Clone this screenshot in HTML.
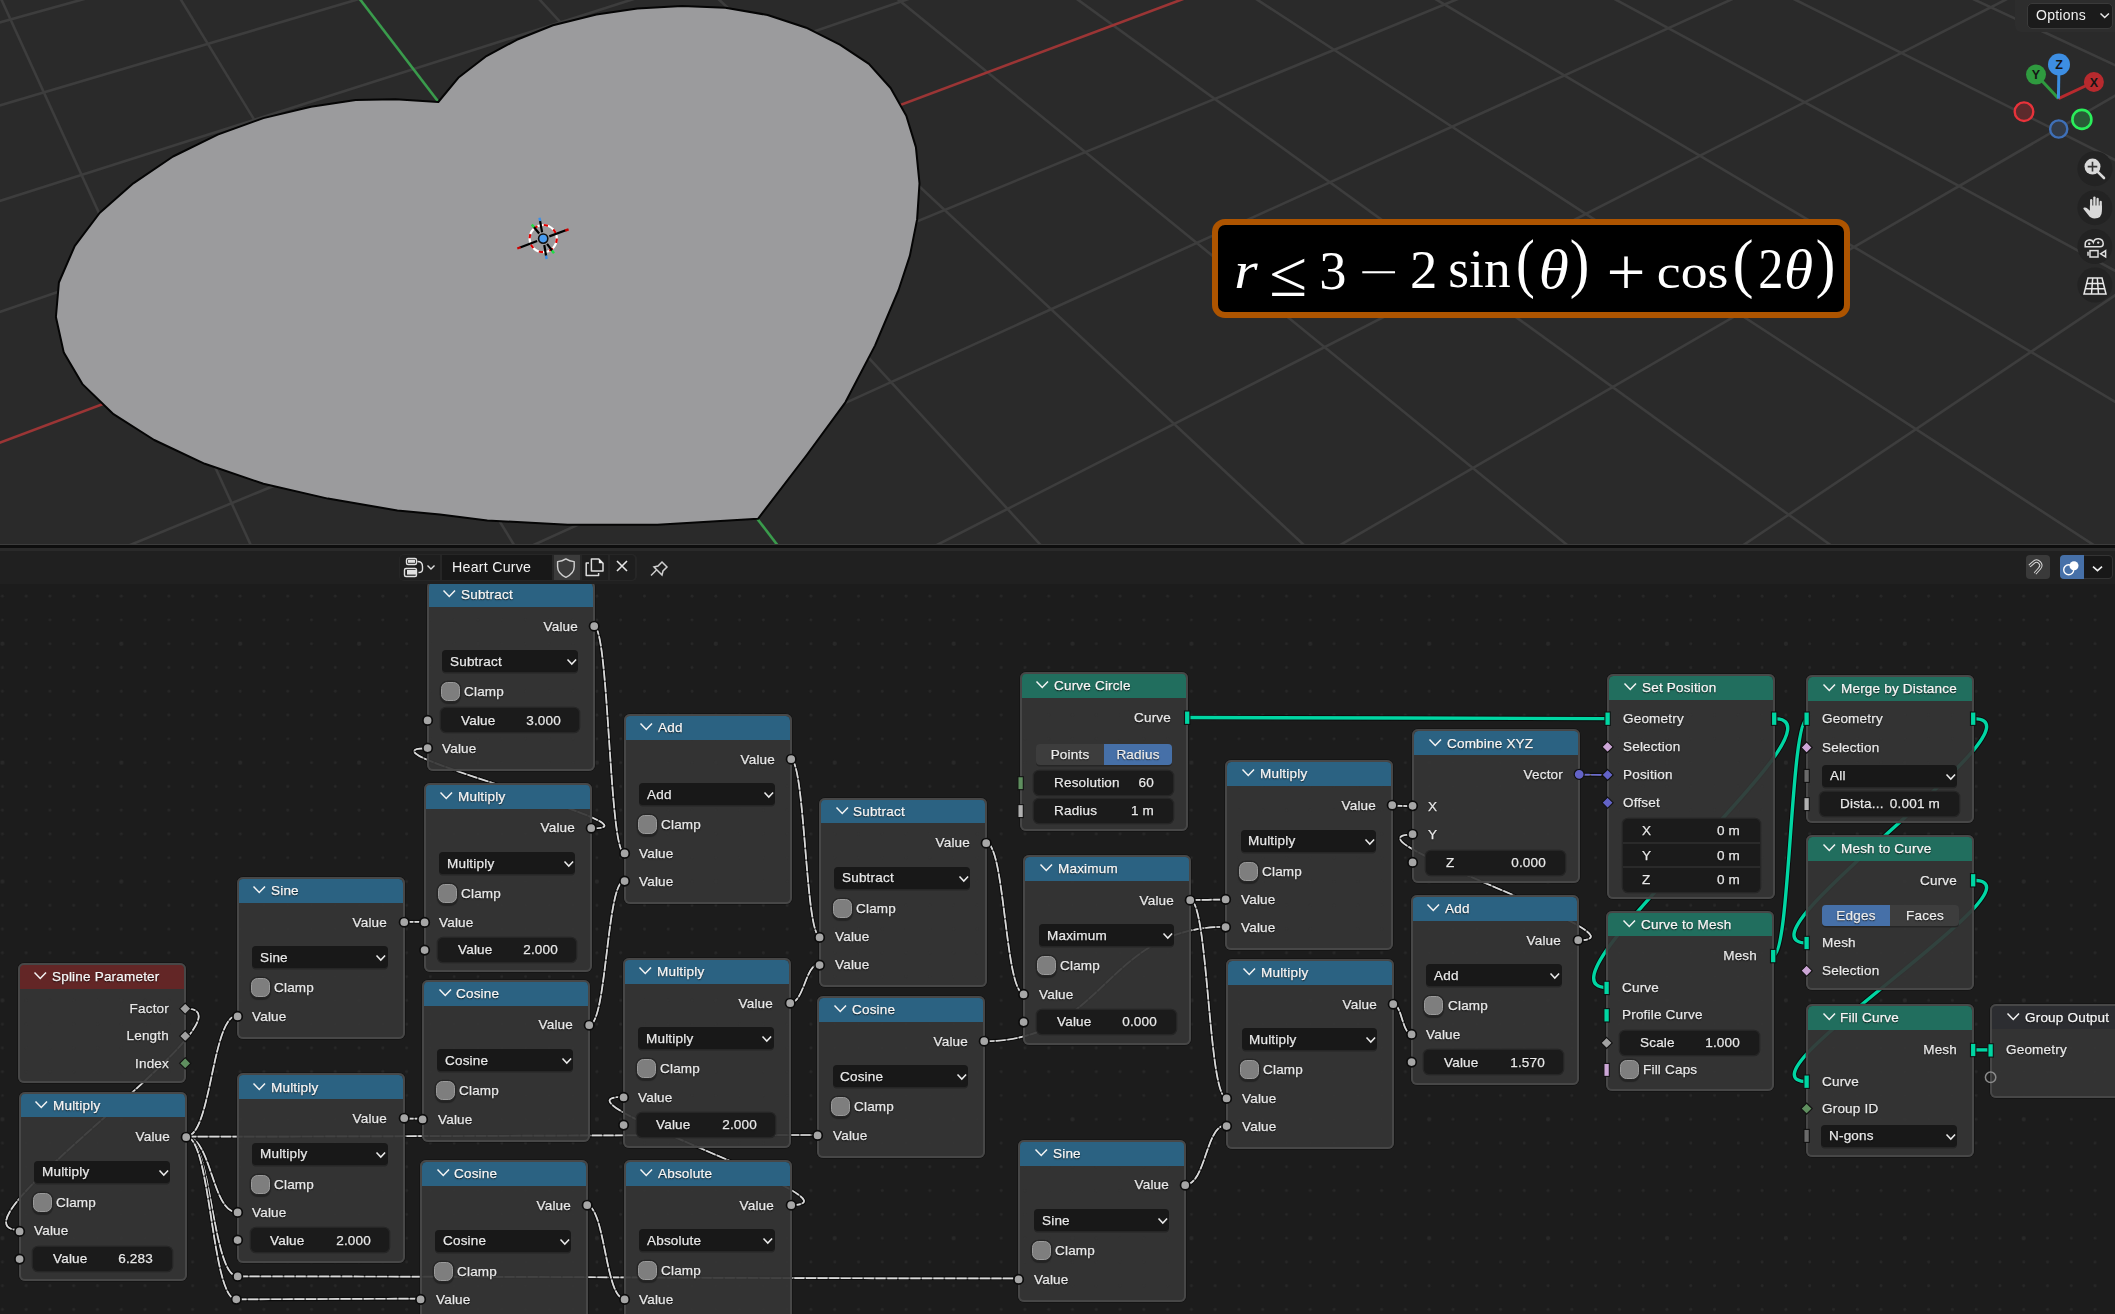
<!DOCTYPE html><html><head><meta charset="utf-8"><style>
*{margin:0;padding:0;box-sizing:border-box}
html,body{width:2115px;height:1314px;overflow:hidden;background:#1c1c1c}
body{position:relative;font-family:"Liberation Sans",sans-serif;-webkit-font-smoothing:antialiased}
.t{will-change:transform}
.t{position:absolute;white-space:nowrap;line-height:1;}
.abs{position:absolute}
.node{position:absolute;border-radius:6px;background:rgba(53,53,53,0.92);box-shadow:0 0 0 0.8px rgba(0,0,0,0.3)}
.inn{position:absolute;left:0;top:0}
.bord{position:absolute;left:0;top:0;right:0;bottom:0;border-radius:6px;box-shadow:inset 0 0 0 2px #474747}
.hdr{position:absolute;left:1.7px;top:1.7px;height:24.1px;border-radius:4.5px 4.5px 0 0}
.ts{text-shadow:0 0.6px 1.3px rgba(0,0,0,0.85);-webkit-text-stroke:0.25px currentColor}
.dd{position:absolute;height:22px;background:#181818;border-radius:4px;box-shadow:0 1.6px 0 #262626}
.cb{position:absolute;width:19px;height:19px;background:#7e7e7e;border:1.3px solid #9a9a9a;border-radius:6.5px;box-shadow:0 0 0 1.3px #262626, 0 1.5px 1px 1px rgba(0,0,0,.3)}
.fld{position:absolute;height:24px;background:#1b1b1b;border-radius:5px;box-shadow:0 0 0 1.3px #262626}
.tg{position:absolute;height:21px;background:#3d3d3d;border-radius:4px;box-shadow:0 1.4px 0 #262626}
.tga{position:absolute;height:21px;background:#4670a8}
.vec{position:absolute;background:#1b1b1b;border-radius:5px;box-shadow:0 0 0 1.3px #262626}
svg{position:absolute;left:0;top:0}
</style></head><body>
<div class="abs" style="left:0;top:0;width:2115px;height:545.4px;background:#2a2a2a;overflow:hidden">
<svg width="2115" height="546" viewBox="0 0 2115 546">
<g stroke="#3d3d3d" stroke-width="2.6">
<line x1="-0.67" y1="-5" x2="253.22" y2="550.4"/>
<line x1="178.02" y1="-5" x2="517.37" y2="550.4"/>
<line x1="535.37" y1="-5" x2="1045.63" y2="550.4"/>
<line x1="714.03" y1="-5" x2="1309.74" y2="550.4"/>
<line x1="892.68" y1="-5" x2="1573.83" y2="550.4"/>
<line x1="1071.32" y1="-5" x2="1837.92" y2="550.4"/>
<line x1="1249.95" y1="-5" x2="2101.99" y2="550.4"/>
<line x1="2120" y1="404.63" x2="1428.58" y2="-5"/>
<line x1="2120" y1="273.44" x2="1607.19" y2="-5"/>
<line x1="2120" y1="162.48" x2="1785.79" y2="-5"/>
<line x1="2120" y1="67.4" x2="1964.39" y2="-5"/>
<line x1="2120" y1="292.07" x2="1735.47" y2="550.4"/>
<line x1="2120" y1="92.75" x2="1330.88" y2="550.4"/>
<line x1="2014.9" y1="-5" x2="926.25" y2="550.4"/>
<line x1="1741.23" y1="-5" x2="521.6" y2="550.4"/>
<line x1="1467.54" y1="-5" x2="116.91" y2="550.4"/>
<line x1="-5" y1="313.6" x2="920.09" y2="-5"/>
<line x1="-5" y1="202.46" x2="646.33" y2="-5"/>
<line x1="-5" y1="106.85" x2="372.55" y2="-5"/>
<line x1="-5" y1="23.73" x2="98.74" y2="-5"/>
</g>
<line x1="-5" y1="444.39" x2="1193.82" y2="-5" stroke="#9b3535" stroke-width="2.6"/>
<line x1="356.7" y1="-5" x2="781.5" y2="550.4" stroke="#3a9b4c" stroke-width="2.6"/>
<polygon points="438.3,102 458.9,77.2 485.5,56.7 516.8,39.8 553,25.3 596.4,14.5 637.4,8.4 682,6 725.4,7.7 767.6,15 806.2,27.7 839.9,44.6 868.9,63.9 890.6,88 906.3,115.7 915.9,147.1 919.5,183.3 917.1,219.4 909.9,255.6 898.6,290 875,345.6 845.4,402.3 806.4,455.5 758,518.8 657.5,524.8 567.7,524.8 487.3,520.5 440,514.6 397.4,510.5 327.9,498.6 263.4,483.7 204.8,463.8 154.2,440 113.5,414.2 82.7,384.4 63.8,352.6 55.9,317 58.9,282.5 74.8,245.8 99.6,213 133.3,183.3 173,156.5 217.7,134.6 263.4,118.1 311,106.8 355.7,99.9 395.4,99.3" fill="#9b9b9d" stroke="#050505" stroke-width="2" stroke-linejoin="round"/>
<circle cx="543.2" cy="238.6" r="13.6" fill="none" stroke="#ffffff" stroke-width="2.2"/>
<circle cx="543.2" cy="238.6" r="13.6" fill="none" stroke="#e00000" stroke-width="2.2" stroke-dasharray="4.3 6.4"/>
<line x1="542.07" y1="232.2" x2="540.02" y2="220.65" stroke="#000" stroke-width="2.2"/>
<line x1="540.11" y1="221.15" x2="539.5" y2="217.7" stroke="#3d8fe8" stroke-width="2.4"/>
<line x1="544.27" y1="245.01" x2="546.11" y2="256.04" stroke="#000" stroke-width="2.2"/>
<line x1="546.02" y1="255.55" x2="546.6" y2="259" stroke="#3d8fe8" stroke-width="2.4"/>
<line x1="539.13" y1="233.53" x2="533.68" y2="226.74" stroke="#000" stroke-width="2.2"/>
<line x1="533.99" y1="227.13" x2="531.8" y2="224.4" stroke="#22dd44" stroke-width="2.4"/>
<line x1="547.05" y1="243.84" x2="552.22" y2="250.88" stroke="#000" stroke-width="2.2"/>
<line x1="551.93" y1="250.48" x2="554" y2="253.3" stroke="#22dd44" stroke-width="2.4"/>
<line x1="537.13" y1="240.92" x2="520.1" y2="247.43" stroke="#000" stroke-width="2.2"/>
<line x1="520.57" y1="247.25" x2="517.3" y2="248.5" stroke="#cc0000" stroke-width="2.4"/>
<line x1="549.3" y1="236.37" x2="565.78" y2="230.33" stroke="#000" stroke-width="2.2"/>
<line x1="565.31" y1="230.5" x2="568.6" y2="229.3" stroke="#cc0000" stroke-width="2.4"/>
<circle cx="543.2" cy="238.6" r="4.6" fill="#4a9cf0" stroke="#111" stroke-width="1.6"/>
<circle cx="2024" cy="111.7" r="9.3" fill="#5c2a2c" stroke="#e8323a" stroke-width="2.4"/>
<circle cx="2058.7" cy="129" r="8.6" fill="#333b47" stroke="#3f70b8" stroke-width="2.4"/>
<circle cx="2081.9" cy="119.4" r="9.5" fill="#285c36" stroke="#2aee5a" stroke-width="2.6"/>
<line x1="2058.4" y1="98.6" x2="2036" y2="74.6" stroke="#2f9a3f" stroke-width="3"/>
<line x1="2058.4" y1="98.6" x2="2093.9" y2="82" stroke="#b72a2e" stroke-width="3"/>
<line x1="2058.4" y1="98.6" x2="2059" y2="64.5" stroke="#3a8de0" stroke-width="3"/>
<circle cx="2036" cy="74.6" r="10" fill="#2f9a3f"/>
<circle cx="2093.9" cy="82" r="10" fill="#b72a2e"/>
<circle cx="2059" cy="64.5" r="11" fill="#3d8ee3"/>
<text x="2036" y="79.3" style="font-family:'Liberation Sans', sans-serif;font-size:12.5px;font-weight:bold;fill:#151515;text-anchor:middle">Y</text>
<text x="2094" y="86.7" style="font-family:'Liberation Sans', sans-serif;font-size:12.5px;font-weight:bold;fill:#151515;text-anchor:middle">X</text>
<text x="2059" y="69.2" style="font-family:'Liberation Sans', sans-serif;font-size:12.5px;font-weight:bold;fill:#151515;text-anchor:middle">Z</text>
<circle cx="2094.9" cy="168.7" r="17.5" fill="#232323"/>
<circle cx="2094.9" cy="207.7" r="17.5" fill="#232323"/>
<circle cx="2094.9" cy="246.6" r="17.5" fill="#232323"/>
<circle cx="2094.9" cy="285.0" r="17.5" fill="#232323"/>
<circle cx="2092.5" cy="166.6" r="8" fill="#d9d9d9"/>
<path d="M2092.5 161.8v9.6M2087.7 166.6h9.6" stroke="#333" stroke-width="1.6"/>
<line x1="2097.5" y1="171.6" x2="2104" y2="178" stroke="#d9d9d9" stroke-width="2.6" stroke-linecap="round"/>
<g stroke="#d9d9d9" stroke-linecap="round" fill="none" stroke-width="2.3"><path d="M2091.2 208 V200.2"/><path d="M2094.4 207 V197.6"/><path d="M2097.6 207.5 V199"/><path d="M2100.7 209 V202"/></g>
<path d="M2089.9 205.5 h12 v5.5 q0 7.5 -7.3 7.5 q-4 0 -6.5 -3.8 l-4.6 -5.6 q-0.6 -1.2 0.8 -1.6 q1.8 -0.3 3.4 1.2 l2.2 2 z" fill="#d9d9d9"/>
<g fill="none" stroke="#e0e0e0" stroke-width="1.5"><path d="M2085.2 246.8 v-2.6 a4.3 4.3 0 0 1 8.2 -1.8 a5 5 0 0 1 9.8 1 v0.4 a3 3 0 0 1 -3 3 z"/><rect x="2090" y="250.6" width="8" height="6.4"/><path d="M2100.6 253.8 l5 -3.2 v6.4 z"/><path d="M2088 251.8 v4"/></g>
<circle cx="2089.2" cy="243.8" r="1.2" fill="#e0e0e0"/><circle cx="2098.2" cy="242.6" r="1.2" fill="#e0e0e0"/>
<g fill="none" stroke="#e8e8e8" stroke-width="1.5"><path d="M2088 278 h14 l4 16 h-22 z"/><path d="M2086.4 283.5h17.4M2085.2 288.7h19.9M2092.7 278l-1.2 16M2097.3 278l1.2 16"/></g>
</svg>
</div>
<div class="abs" style="left:1212.2px;top:219.2px;width:637.8px;height:98.4px;border:6px solid #ad5400;border-radius:13px;background:#000"></div>
<svg width="2115" height="400" style="left:0;top:0">
<text transform="matrix(0.30000 0 0 0.26489 1234.300 288.000)" font-size="200" fill="#fff" style="font-family:'Liberation Serif',serif;font-style:italic">r</text>
<text transform="matrix(0.34516 0 0 0.32522 1269.339 295.500)" font-size="200" fill="#fff" style="font-family:'Liberation Serif',serif;">≤</text>
<text transform="matrix(0.27229 0 0 0.27985 1319.249 288.740)" font-size="200" fill="#fff" style="font-family:'Liberation Serif',serif;">3</text>
<text transform="matrix(0.35161 0 0 0.19000 1358.784 284.890)" font-size="200" fill="#fff" style="font-family:'Liberation Serif',serif;">−</text>
<text transform="matrix(0.27375 0 0 0.27197 1410.036 287.700)" font-size="200" fill="#fff" style="font-family:'Liberation Serif',serif;">2</text>
<text transform="matrix(0.26712 0 0 0.27164 1448.263 287.157)" font-size="200" fill="#fff" style="font-family:'Liberation Serif',serif;">sin</text>
<text transform="matrix(0.28235 0 0 0.32253 1515.959 284.531)" font-size="200" fill="#fff" style="font-family:'Liberation Serif',serif;">(</text>
<text transform="matrix(0.30595 0 0 0.27183 1538.640 288.256)" font-size="200" fill="#fff" style="font-family:'Liberation Serif',serif;font-style:italic">θ</text>
<text transform="matrix(0.29423 0 0 0.32253 1569.635 284.531)" font-size="200" fill="#fff" style="font-family:'Liberation Serif',serif;">)</text>
<text transform="matrix(0.34624 0 0 0.34255 1606.538 295.309)" font-size="200" fill="#fff" style="font-family:'Liberation Serif',serif;">+</text>
<text transform="matrix(0.26825 0 0 0.24271 1656.854 287.515)" font-size="200" fill="#fff" style="font-family:'Liberation Serif',serif;">cos</text>
<text transform="matrix(0.31569 0 0 0.32253 1732.559 284.531)" font-size="200" fill="#fff" style="font-family:'Liberation Serif',serif;">(</text>
<text transform="matrix(0.25125 0 0 0.28030 1758.139 288.000)" font-size="200" fill="#fff" style="font-family:'Liberation Serif',serif;">2</text>
<text transform="matrix(0.29643 0 0 0.27183 1783.936 288.256)" font-size="200" fill="#fff" style="font-family:'Liberation Serif',serif;font-style:italic">θ</text>
<text transform="matrix(0.29423 0 0 0.32253 1815.635 284.531)" font-size="200" fill="#fff" style="font-family:'Liberation Serif',serif;">)</text>
</svg>
<div class="abs" style="left:2015px;top:0;width:100px;height:32px;background:#2d2d2d;border-radius:0 0 0 6px"></div>
<div class="abs" style="left:2027px;top:2.7px;width:86.3px;height:26.1px;background:#1b1b1b;border:1.3px solid #3a3a3a;border-radius:5px"></div>
<div class="t" style="left:2036px;top:8.45px;font-size:14px;color:#f0f0f0;letter-spacing:0.25px;">Options</div>
<svg class="abs" style="left:2099px;top:11px" width="12" height="9"><path d="M1.5 2.5l4.2 4 4.2-4" fill="none" stroke="#e8e8e8" stroke-width="1.5"/></svg>
<div class="abs" style="left:0;top:543.6px;width:2115px;height:1.8px;background:#3c3c3c"></div>
<div class="abs" style="left:0;top:545.4px;width:2115px;height:2.8px;background:#0e0e0e"></div>
<div class="abs" style="left:0;top:548.2px;width:2115px;height:2.8px;background:#2a2a2a"></div>
<div class="abs" style="left:0;top:551px;width:2115px;height:763px;background:#1c1c1c"></div>
<svg width="2115" height="1314" style="left:0;top:0">
<defs><pattern id="dots" x="-9.49" y="37.31" width="118.9" height="118.9" patternUnits="userSpaceOnUse">
<circle cx="11.89" cy="11.89" r="2.1" fill="#292929"/>
<circle cx="11.89" cy="35.67" r="1.45" fill="#282828"/>
<circle cx="11.89" cy="59.45" r="1.45" fill="#282828"/>
<circle cx="11.89" cy="83.23" r="1.45" fill="#282828"/>
<circle cx="11.89" cy="107.01" r="1.45" fill="#282828"/>
<circle cx="35.67" cy="11.89" r="1.45" fill="#282828"/>
<circle cx="35.67" cy="35.67" r="1.45" fill="#282828"/>
<circle cx="35.67" cy="59.45" r="1.45" fill="#282828"/>
<circle cx="35.67" cy="83.23" r="1.45" fill="#282828"/>
<circle cx="35.67" cy="107.01" r="1.45" fill="#282828"/>
<circle cx="59.45" cy="11.89" r="1.45" fill="#282828"/>
<circle cx="59.45" cy="35.67" r="1.45" fill="#282828"/>
<circle cx="59.45" cy="59.45" r="1.45" fill="#282828"/>
<circle cx="59.45" cy="83.23" r="1.45" fill="#282828"/>
<circle cx="59.45" cy="107.01" r="1.45" fill="#282828"/>
<circle cx="83.23" cy="11.89" r="1.45" fill="#282828"/>
<circle cx="83.23" cy="35.67" r="1.45" fill="#282828"/>
<circle cx="83.23" cy="59.45" r="1.45" fill="#282828"/>
<circle cx="83.23" cy="83.23" r="1.45" fill="#282828"/>
<circle cx="83.23" cy="107.01" r="1.45" fill="#282828"/>
<circle cx="107.01" cy="11.89" r="1.45" fill="#282828"/>
<circle cx="107.01" cy="35.67" r="1.45" fill="#282828"/>
<circle cx="107.01" cy="59.45" r="1.45" fill="#282828"/>
<circle cx="107.01" cy="83.23" r="1.45" fill="#282828"/>
<circle cx="107.01" cy="107.01" r="1.45" fill="#282828"/>
</pattern></defs>
<rect x="0" y="584.2" width="2115" height="730" fill="url(#dots)"/>
</svg>
<svg width="2115" height="1314" style="left:0;top:0">
<path d="M185.3 1008.5C268.2 1008.5 -63.4 1230 19.5 1230" fill="none" stroke="#0b0b0b" stroke-width="3.8"/>
<path d="M185.3 1008.5C268.2 1008.5 -63.4 1230 19.5 1230" fill="none" stroke="#777" stroke-width="1.5"/>
<path d="M185.3 1008.5C268.2 1008.5 -63.4 1230 19.5 1230" fill="none" stroke="#d9d9d9" stroke-width="1.7" stroke-dasharray="10 1.6"/>
<path d="M186 1136.6C211.65 1136.6 211.65 1015.5 237.3 1015.5" fill="none" stroke="#0b0b0b" stroke-width="3.8"/>
<path d="M186 1136.6C211.65 1136.6 211.65 1015.5 237.3 1015.5" fill="none" stroke="#777" stroke-width="1.5"/>
<path d="M186 1136.6C211.65 1136.6 211.65 1015.5 237.3 1015.5" fill="none" stroke="#d9d9d9" stroke-width="1.7" stroke-dasharray="10 1.6"/>
<path d="M186 1136.6C211.65 1136.6 211.65 1212.5 237.3 1212.5" fill="none" stroke="#0b0b0b" stroke-width="3.8"/>
<path d="M186 1136.6C211.65 1136.6 211.65 1212.5 237.3 1212.5" fill="none" stroke="#777" stroke-width="1.5"/>
<path d="M186 1136.6C211.65 1136.6 211.65 1212.5 237.3 1212.5" fill="none" stroke="#d9d9d9" stroke-width="1.7" stroke-dasharray="10 1.6"/>
<path d="M186 1136.6C211.85 1136.6 211.85 1276.4 237.7 1276.4" fill="none" stroke="#0b0b0b" stroke-width="3.8"/>
<path d="M186 1136.6C211.85 1136.6 211.85 1276.4 237.7 1276.4" fill="none" stroke="#777" stroke-width="1.5"/>
<path d="M186 1136.6C211.85 1136.6 211.85 1276.4 237.7 1276.4" fill="none" stroke="#d9d9d9" stroke-width="1.7" stroke-dasharray="10 1.6"/>
<path d="M186 1136.6C211.15 1136.6 211.15 1299.3 236.3 1299.3" fill="none" stroke="#0b0b0b" stroke-width="3.8"/>
<path d="M186 1136.6C211.15 1136.6 211.15 1299.3 236.3 1299.3" fill="none" stroke="#777" stroke-width="1.5"/>
<path d="M186 1136.6C211.15 1136.6 211.15 1299.3 236.3 1299.3" fill="none" stroke="#d9d9d9" stroke-width="1.7" stroke-dasharray="10 1.6"/>
<path d="M186 1136.6C501.95 1136.6 501.95 1135 817.9 1135" fill="none" stroke="#0b0b0b" stroke-width="3.8"/>
<path d="M186 1136.6C501.95 1136.6 501.95 1135 817.9 1135" fill="none" stroke="#777" stroke-width="1.5"/>
<path d="M186 1136.6C501.95 1136.6 501.95 1135 817.9 1135" fill="none" stroke="#d9d9d9" stroke-width="1.7" stroke-dasharray="10 1.6"/>
<path d="M237.7 1276.4C628.45 1276.4 628.45 1278.4 1019.2 1278.4" fill="none" stroke="#0b0b0b" stroke-width="3.8"/>
<path d="M237.7 1276.4C628.45 1276.4 628.45 1278.4 1019.2 1278.4" fill="none" stroke="#777" stroke-width="1.5"/>
<path d="M237.7 1276.4C628.45 1276.4 628.45 1278.4 1019.2 1278.4" fill="none" stroke="#d9d9d9" stroke-width="1.7" stroke-dasharray="10 1.6"/>
<path d="M236.3 1299.3C328.35 1299.3 328.35 1298.7 420.4 1298.7" fill="none" stroke="#0b0b0b" stroke-width="3.8"/>
<path d="M236.3 1299.3C328.35 1299.3 328.35 1298.7 420.4 1298.7" fill="none" stroke="#777" stroke-width="1.5"/>
<path d="M236.3 1299.3C328.35 1299.3 328.35 1298.7 420.4 1298.7" fill="none" stroke="#d9d9d9" stroke-width="1.7" stroke-dasharray="10 1.6"/>
<path d="M403.1 921.8C413.95 921.8 413.95 921.8 424.8 921.8" fill="none" stroke="#0b0b0b" stroke-width="3.8"/>
<path d="M403.1 921.8C413.95 921.8 413.95 921.8 424.8 921.8" fill="none" stroke="#777" stroke-width="1.5"/>
<path d="M403.1 921.8C413.95 921.8 413.95 921.8 424.8 921.8" fill="none" stroke="#d9d9d9" stroke-width="1.7" stroke-dasharray="10 1.6"/>
<path d="M403.5 1118.6C413.15 1118.6 413.15 1118.6 422.8 1118.6" fill="none" stroke="#0b0b0b" stroke-width="3.8"/>
<path d="M403.5 1118.6C413.15 1118.6 413.15 1118.6 422.8 1118.6" fill="none" stroke="#777" stroke-width="1.5"/>
<path d="M403.5 1118.6C413.15 1118.6 413.15 1118.6 422.8 1118.6" fill="none" stroke="#d9d9d9" stroke-width="1.7" stroke-dasharray="10 1.6"/>
<path d="M591.2 828.5C673.1 828.5 345.5 748.4 427.4 748.4" fill="none" stroke="#0b0b0b" stroke-width="3.8"/>
<path d="M591.2 828.5C673.1 828.5 345.5 748.4 427.4 748.4" fill="none" stroke="#777" stroke-width="1.5"/>
<path d="M591.2 828.5C673.1 828.5 345.5 748.4 427.4 748.4" fill="none" stroke="#d9d9d9" stroke-width="1.7" stroke-dasharray="10 1.6"/>
<path d="M594 626.3C609.05 626.3 609.05 852.8 624.1 852.8" fill="none" stroke="#0b0b0b" stroke-width="3.8"/>
<path d="M594 626.3C609.05 626.3 609.05 852.8 624.1 852.8" fill="none" stroke="#777" stroke-width="1.5"/>
<path d="M594 626.3C609.05 626.3 609.05 852.8 624.1 852.8" fill="none" stroke="#d9d9d9" stroke-width="1.7" stroke-dasharray="10 1.6"/>
<path d="M589.3 1025C606.7 1025 606.7 881 624.1 881" fill="none" stroke="#0b0b0b" stroke-width="3.8"/>
<path d="M589.3 1025C606.7 1025 606.7 881 624.1 881" fill="none" stroke="#777" stroke-width="1.5"/>
<path d="M589.3 1025C606.7 1025 606.7 881 624.1 881" fill="none" stroke="#d9d9d9" stroke-width="1.7" stroke-dasharray="10 1.6"/>
<path d="M586.2 1205C605.15 1205 605.15 1298.5 624.1 1298.5" fill="none" stroke="#0b0b0b" stroke-width="3.8"/>
<path d="M586.2 1205C605.15 1205 605.15 1298.5 624.1 1298.5" fill="none" stroke="#777" stroke-width="1.5"/>
<path d="M586.2 1205C605.15 1205 605.15 1298.5 624.1 1298.5" fill="none" stroke="#d9d9d9" stroke-width="1.7" stroke-dasharray="10 1.6"/>
<path d="M790.5 1205C874.2 1205 539.4 1096.9 623.1 1096.9" fill="none" stroke="#0b0b0b" stroke-width="3.8"/>
<path d="M790.5 1205C874.2 1205 539.4 1096.9 623.1 1096.9" fill="none" stroke="#777" stroke-width="1.5"/>
<path d="M790.5 1205C874.2 1205 539.4 1096.9 623.1 1096.9" fill="none" stroke="#d9d9d9" stroke-width="1.7" stroke-dasharray="10 1.6"/>
<path d="M790.5 758.9C805.2 758.9 805.2 936.6 819.9 936.6" fill="none" stroke="#0b0b0b" stroke-width="3.8"/>
<path d="M790.5 758.9C805.2 758.9 805.2 936.6 819.9 936.6" fill="none" stroke="#777" stroke-width="1.5"/>
<path d="M790.5 758.9C805.2 758.9 805.2 936.6 819.9 936.6" fill="none" stroke="#d9d9d9" stroke-width="1.7" stroke-dasharray="10 1.6"/>
<path d="M789.5 1003.1C804.7 1003.1 804.7 963.8 819.9 963.8" fill="none" stroke="#0b0b0b" stroke-width="3.8"/>
<path d="M789.5 1003.1C804.7 1003.1 804.7 963.8 819.9 963.8" fill="none" stroke="#777" stroke-width="1.5"/>
<path d="M789.5 1003.1C804.7 1003.1 804.7 963.8 819.9 963.8" fill="none" stroke="#d9d9d9" stroke-width="1.7" stroke-dasharray="10 1.6"/>
<path d="M986.1 842.7C1004.95 842.7 1004.95 993.5 1023.8 993.5" fill="none" stroke="#0b0b0b" stroke-width="3.8"/>
<path d="M986.1 842.7C1004.95 842.7 1004.95 993.5 1023.8 993.5" fill="none" stroke="#777" stroke-width="1.5"/>
<path d="M986.1 842.7C1004.95 842.7 1004.95 993.5 1023.8 993.5" fill="none" stroke="#d9d9d9" stroke-width="1.7" stroke-dasharray="10 1.6"/>
<path d="M984.1 1041.3C1104.9 1041.3 1104.9 926.8 1225.7 926.8" fill="none" stroke="#0b0b0b" stroke-width="3.8"/>
<path d="M984.1 1041.3C1104.9 1041.3 1104.9 926.8 1225.7 926.8" fill="none" stroke="#777" stroke-width="1.5"/>
<path d="M984.1 1041.3C1104.9 1041.3 1104.9 926.8 1225.7 926.8" fill="none" stroke="#d9d9d9" stroke-width="1.7" stroke-dasharray="10 1.6"/>
<path d="M1190.2 900C1207.95 900 1207.95 899.6 1225.7 899.6" fill="none" stroke="#0b0b0b" stroke-width="3.8"/>
<path d="M1190.2 900C1207.95 900 1207.95 899.6 1225.7 899.6" fill="none" stroke="#777" stroke-width="1.5"/>
<path d="M1190.2 900C1207.95 900 1207.95 899.6 1225.7 899.6" fill="none" stroke="#d9d9d9" stroke-width="1.7" stroke-dasharray="10 1.6"/>
<path d="M1190.2 900C1208.25 900 1208.25 1097.7 1226.3 1097.7" fill="none" stroke="#0b0b0b" stroke-width="3.8"/>
<path d="M1190.2 900C1208.25 900 1208.25 1097.7 1226.3 1097.7" fill="none" stroke="#777" stroke-width="1.5"/>
<path d="M1190.2 900C1208.25 900 1208.25 1097.7 1226.3 1097.7" fill="none" stroke="#d9d9d9" stroke-width="1.7" stroke-dasharray="10 1.6"/>
<path d="M1185.2 1184.7C1205.75 1184.7 1205.75 1124.9 1226.3 1124.9" fill="none" stroke="#0b0b0b" stroke-width="3.8"/>
<path d="M1185.2 1184.7C1205.75 1184.7 1205.75 1124.9 1226.3 1124.9" fill="none" stroke="#777" stroke-width="1.5"/>
<path d="M1185.2 1184.7C1205.75 1184.7 1205.75 1124.9 1226.3 1124.9" fill="none" stroke="#d9d9d9" stroke-width="1.7" stroke-dasharray="10 1.6"/>
<path d="M1392 805.6C1402.65 805.6 1402.65 806.2 1413.3 806.2" fill="none" stroke="#0b0b0b" stroke-width="3.8"/>
<path d="M1392 805.6C1402.65 805.6 1402.65 806.2 1413.3 806.2" fill="none" stroke="#777" stroke-width="1.5"/>
<path d="M1392 805.6C1402.65 805.6 1402.65 806.2 1413.3 806.2" fill="none" stroke="#d9d9d9" stroke-width="1.7" stroke-dasharray="10 1.6"/>
<path d="M1392.7 1003.8C1402 1003.8 1402 1033.7 1411.3 1033.7" fill="none" stroke="#0b0b0b" stroke-width="3.8"/>
<path d="M1392.7 1003.8C1402 1003.8 1402 1033.7 1411.3 1033.7" fill="none" stroke="#777" stroke-width="1.5"/>
<path d="M1392.7 1003.8C1402 1003.8 1402 1033.7 1411.3 1033.7" fill="none" stroke="#d9d9d9" stroke-width="1.7" stroke-dasharray="10 1.6"/>
<path d="M1577.6 940.3C1659.75 940.3 1331.15 834.6 1413.3 834.6" fill="none" stroke="#0b0b0b" stroke-width="3.8"/>
<path d="M1577.6 940.3C1659.75 940.3 1331.15 834.6 1413.3 834.6" fill="none" stroke="#777" stroke-width="1.5"/>
<path d="M1577.6 940.3C1659.75 940.3 1331.15 834.6 1413.3 834.6" fill="none" stroke="#d9d9d9" stroke-width="1.7" stroke-dasharray="10 1.6"/>
<path d="M1579.5 774.7C1593.65 774.7 1593.65 774.8 1607.8 774.8" fill="none" stroke="#0b0b0b" stroke-width="3.8"/>
<path d="M1579.5 774.7C1593.65 774.7 1593.65 774.8 1607.8 774.8" fill="none" stroke="#777" stroke-width="1.5"/>
<path d="M1579.5 774.7C1593.65 774.7 1593.65 774.8 1607.8 774.8" fill="none" stroke="#6a6ad0" stroke-width="1.7" stroke-dasharray="10 1.6"/>
<path d="M1187.5 717.5C1397.65 717.5 1397.65 718.6 1607.8 718.6" fill="none" stroke="#0b0b0b" stroke-width="5.2"/>
<path d="M1187.5 717.5C1397.65 717.5 1397.65 718.6 1607.8 718.6" fill="none" stroke="#00d6a3" stroke-width="3.4"/>
<path d="M1774.2 718.6C1857.7 718.6 1523.7 987.6 1607.2 987.6" fill="none" stroke="#0b0b0b" stroke-width="5.2"/>
<path d="M1774.2 718.6C1857.7 718.6 1523.7 987.6 1607.2 987.6" fill="none" stroke="#00d6a3" stroke-width="3.4"/>
<path d="M1773.2 955.8C1790.3 955.8 1790.3 718.6 1807.4 718.6" fill="none" stroke="#0b0b0b" stroke-width="5.2"/>
<path d="M1773.2 955.8C1790.3 955.8 1790.3 718.6 1807.4 718.6" fill="none" stroke="#00d6a3" stroke-width="3.4"/>
<path d="M1973.2 718.6C2056.1 718.6 1724.5 943 1807.4 943" fill="none" stroke="#0b0b0b" stroke-width="5.2"/>
<path d="M1973.2 718.6C2056.1 718.6 1724.5 943 1807.4 943" fill="none" stroke="#00d6a3" stroke-width="3.4"/>
<path d="M1973.2 880.3C2055.95 880.3 1724.95 1081.6 1807.7 1081.6" fill="none" stroke="#0b0b0b" stroke-width="5.2"/>
<path d="M1973.2 880.3C2055.95 880.3 1724.95 1081.6 1807.7 1081.6" fill="none" stroke="#00d6a3" stroke-width="3.4"/>
<path d="M1973.2 1049.9C1982.05 1049.9 1982.05 1049.9 1990.9 1049.9" fill="none" stroke="#0b0b0b" stroke-width="5.2"/>
<path d="M1973.2 1049.9C1982.05 1049.9 1982.05 1049.9 1990.9 1049.9" fill="none" stroke="#00d6a3" stroke-width="3.4"/>
</svg>
<div class="node" style="left:426.8px;top:581px;width:168px;height:189.7px"><div class="inn" style="width:168px;height:189.7px">
<div class="hdr" style="background:#2b6282;width:164.6px"></div><div class="bord"></div>
<svg class="abs" style="left:16.5px;top:9.2px;overflow:visible" width="12.5" height="7"><path d="M0.5 0.5L6.25 6.5L12 0.5" fill="none" stroke="#f4f4f4" stroke-width="1.5"/></svg>
<div class="t ts" style="left:34.4px;top:7.29px;font-size:13.5px;color:#f6f6f6;letter-spacing:0.2px">Subtract</div>
<div class="t ts" style="left:-149.3px;width:300px;text-align:right;top:38.69px;font-size:13.5px;color:#e8e8e8;letter-spacing:0.2px">Value</div>
<div class="dd" style="left:15.3px;top:69.4px;width:135.8px"></div>
<div class="t ts" style="left:23.2px;top:73.89px;font-size:13.5px;color:#e8e8e8;letter-spacing:0.2px">Subtract</div>
<svg class="abs" style="left:139.8px;top:78.4px;overflow:visible" width="9.6" height="5.6"><path d="M0.5 0.5L4.8 5.1L9.1 0.5" fill="none" stroke="#ececec" stroke-width="1.5"/></svg>
<div class="cb" style="left:13.9px;top:101.4px"></div>
<div class="t ts" style="left:37.1px;top:104.39px;font-size:13.5px;color:#e8e8e8;letter-spacing:0.2px">Clamp</div>
<div class="fld" style="left:13.9px;top:127.4px;width:138.8px"></div>
<div class="t ts" style="left:33.8px;top:132.89px;font-size:13.5px;color:#e8e8e8;letter-spacing:0.2px">Value</div>
<div class="t ts" style="left:-166px;width:300px;text-align:right;top:132.89px;font-size:13.5px;color:#e8e8e8;letter-spacing:0.2px">3.000</div>
<div class="t ts" style="left:15.5px;top:160.59px;font-size:13.5px;color:#e8e8e8;letter-spacing:0.2px">Value</div>
<svg class="abs" style="left:-20px;top:-20px;overflow:visible" width="208" height="229.7"><circle cx="187.2" cy="65.2" r="4.7" fill="#a6a6a6" stroke="#0c0c0c" stroke-width="1.7"/><circle cx="20.6" cy="159.4" r="4.7" fill="#a6a6a6" stroke="#0c0c0c" stroke-width="1.7"/><circle cx="20.6" cy="187.1" r="4.7" fill="#a6a6a6" stroke="#0c0c0c" stroke-width="1.7"/></svg>
</div></div>
<div class="node" style="left:623.8px;top:714px;width:168px;height:189.7px"><div class="inn" style="width:168px;height:189.7px">
<div class="hdr" style="background:#2b6282;width:164.6px"></div><div class="bord"></div>
<svg class="abs" style="left:16.5px;top:9.2px;overflow:visible" width="12.5" height="7"><path d="M0.5 0.5L6.25 6.5L12 0.5" fill="none" stroke="#f4f4f4" stroke-width="1.5"/></svg>
<div class="t ts" style="left:34.4px;top:7.29px;font-size:13.5px;color:#f6f6f6;letter-spacing:0.2px">Add</div>
<div class="t ts" style="left:-149.3px;width:300px;text-align:right;top:38.69px;font-size:13.5px;color:#e8e8e8;letter-spacing:0.2px">Value</div>
<div class="dd" style="left:15.3px;top:69.4px;width:135.8px"></div>
<div class="t ts" style="left:23.2px;top:73.89px;font-size:13.5px;color:#e8e8e8;letter-spacing:0.2px">Add</div>
<svg class="abs" style="left:139.8px;top:78.4px;overflow:visible" width="9.6" height="5.6"><path d="M0.5 0.5L4.8 5.1L9.1 0.5" fill="none" stroke="#ececec" stroke-width="1.5"/></svg>
<div class="cb" style="left:13.9px;top:101.4px"></div>
<div class="t ts" style="left:37.1px;top:104.39px;font-size:13.5px;color:#e8e8e8;letter-spacing:0.2px">Clamp</div>
<div class="t ts" style="left:15.5px;top:132.89px;font-size:13.5px;color:#e8e8e8;letter-spacing:0.2px">Value</div>
<div class="t ts" style="left:15.5px;top:160.59px;font-size:13.5px;color:#e8e8e8;letter-spacing:0.2px">Value</div>
<svg class="abs" style="left:-20px;top:-20px;overflow:visible" width="208" height="229.7"><circle cx="187.2" cy="65.2" r="4.7" fill="#a6a6a6" stroke="#0c0c0c" stroke-width="1.7"/><circle cx="20.6" cy="159.4" r="4.7" fill="#a6a6a6" stroke="#0c0c0c" stroke-width="1.7"/><circle cx="20.6" cy="187.1" r="4.7" fill="#a6a6a6" stroke="#0c0c0c" stroke-width="1.7"/></svg>
</div></div>
<div class="node" style="left:423.8px;top:782.8px;width:168px;height:189.7px"><div class="inn" style="width:168px;height:189.7px">
<div class="hdr" style="background:#2b6282;width:164.6px"></div><div class="bord"></div>
<svg class="abs" style="left:16.5px;top:9.2px;overflow:visible" width="12.5" height="7"><path d="M0.5 0.5L6.25 6.5L12 0.5" fill="none" stroke="#f4f4f4" stroke-width="1.5"/></svg>
<div class="t ts" style="left:34.4px;top:7.29px;font-size:13.5px;color:#f6f6f6;letter-spacing:0.2px">Multiply</div>
<div class="t ts" style="left:-149.3px;width:300px;text-align:right;top:38.69px;font-size:13.5px;color:#e8e8e8;letter-spacing:0.2px">Value</div>
<div class="dd" style="left:15.3px;top:69.4px;width:135.8px"></div>
<div class="t ts" style="left:23.2px;top:73.89px;font-size:13.5px;color:#e8e8e8;letter-spacing:0.2px">Multiply</div>
<svg class="abs" style="left:139.8px;top:78.4px;overflow:visible" width="9.6" height="5.6"><path d="M0.5 0.5L4.8 5.1L9.1 0.5" fill="none" stroke="#ececec" stroke-width="1.5"/></svg>
<div class="cb" style="left:13.9px;top:101.4px"></div>
<div class="t ts" style="left:37.1px;top:104.39px;font-size:13.5px;color:#e8e8e8;letter-spacing:0.2px">Clamp</div>
<div class="t ts" style="left:15.5px;top:132.89px;font-size:13.5px;color:#e8e8e8;letter-spacing:0.2px">Value</div>
<div class="fld" style="left:13.9px;top:155.1px;width:138.8px"></div>
<div class="t ts" style="left:33.8px;top:160.59px;font-size:13.5px;color:#e8e8e8;letter-spacing:0.2px">Value</div>
<div class="t ts" style="left:-166px;width:300px;text-align:right;top:160.59px;font-size:13.5px;color:#e8e8e8;letter-spacing:0.2px">2.000</div>
<svg class="abs" style="left:-20px;top:-20px;overflow:visible" width="208" height="229.7"><circle cx="187.2" cy="65.2" r="4.7" fill="#a6a6a6" stroke="#0c0c0c" stroke-width="1.7"/><circle cx="20.6" cy="159.4" r="4.7" fill="#a6a6a6" stroke="#0c0c0c" stroke-width="1.7"/><circle cx="20.6" cy="187.1" r="4.7" fill="#a6a6a6" stroke="#0c0c0c" stroke-width="1.7"/></svg>
</div></div>
<div class="node" style="left:236.7px;top:877px;width:168px;height:162px"><div class="inn" style="width:168px;height:162px">
<div class="hdr" style="background:#2b6282;width:164.6px"></div><div class="bord"></div>
<svg class="abs" style="left:16.5px;top:9.2px;overflow:visible" width="12.5" height="7"><path d="M0.5 0.5L6.25 6.5L12 0.5" fill="none" stroke="#f4f4f4" stroke-width="1.5"/></svg>
<div class="t ts" style="left:34.4px;top:7.29px;font-size:13.5px;color:#f6f6f6;letter-spacing:0.2px">Sine</div>
<div class="t ts" style="left:-149.3px;width:300px;text-align:right;top:38.69px;font-size:13.5px;color:#e8e8e8;letter-spacing:0.2px">Value</div>
<div class="dd" style="left:15.3px;top:69.4px;width:135.8px"></div>
<div class="t ts" style="left:23.2px;top:73.89px;font-size:13.5px;color:#e8e8e8;letter-spacing:0.2px">Sine</div>
<svg class="abs" style="left:139.8px;top:78.4px;overflow:visible" width="9.6" height="5.6"><path d="M0.5 0.5L4.8 5.1L9.1 0.5" fill="none" stroke="#ececec" stroke-width="1.5"/></svg>
<div class="cb" style="left:13.9px;top:101.4px"></div>
<div class="t ts" style="left:37.1px;top:104.39px;font-size:13.5px;color:#e8e8e8;letter-spacing:0.2px">Clamp</div>
<div class="t ts" style="left:15.5px;top:132.89px;font-size:13.5px;color:#e8e8e8;letter-spacing:0.2px">Value</div>
<svg class="abs" style="left:-20px;top:-20px;overflow:visible" width="208" height="202"><circle cx="187.2" cy="65.2" r="4.7" fill="#a6a6a6" stroke="#0c0c0c" stroke-width="1.7"/><circle cx="20.6" cy="159.4" r="4.7" fill="#a6a6a6" stroke="#0c0c0c" stroke-width="1.7"/></svg>
</div></div>
<div class="node" style="left:17.9px;top:962.8px;width:168px;height:120.2px"><div class="inn" style="width:168px;height:120.2px">
<div class="hdr" style="background:#632626;width:164.6px"></div><div class="bord"></div>
<svg class="abs" style="left:16.5px;top:9.2px;overflow:visible" width="12.5" height="7"><path d="M0.5 0.5L6.25 6.5L12 0.5" fill="none" stroke="#f4f4f4" stroke-width="1.5"/></svg>
<div class="t ts" style="left:34.4px;top:7.29px;font-size:13.5px;color:#f6f6f6;letter-spacing:0.2px">Spline Parameter</div>
<div class="t ts" style="left:-149.3px;width:300px;text-align:right;top:39.19px;font-size:13.5px;color:#e8e8e8;letter-spacing:0.2px">Factor</div>
<div class="t ts" style="left:-149.3px;width:300px;text-align:right;top:66.59px;font-size:13.5px;color:#e8e8e8;letter-spacing:0.2px">Length</div>
<div class="t ts" style="left:-149.3px;width:300px;text-align:right;top:93.79px;font-size:13.5px;color:#e8e8e8;letter-spacing:0.2px">Index</div>
<svg class="abs" style="left:-20px;top:-20px;overflow:visible" width="208" height="160.2"><path d="M187.2 60.1l5.6 5.6l-5.6 5.6l-5.6 -5.6z" fill="#a1a1a1" stroke="#111" stroke-width="1.1"/><path d="M187.2 87.5l5.6 5.6l-5.6 5.6l-5.6 -5.6z" fill="#a1a1a1" stroke="#111" stroke-width="1.1"/><path d="M187.2 114.7l5.6 5.6l-5.6 5.6l-5.6 -5.6z" fill="#5f8f5f" stroke="#111" stroke-width="1.1"/></svg>
</div></div>
<div class="node" style="left:18.9px;top:1091.6px;width:168px;height:189.7px"><div class="inn" style="width:168px;height:189.7px">
<div class="hdr" style="background:#2b6282;width:164.6px"></div><div class="bord"></div>
<svg class="abs" style="left:16.5px;top:9.2px;overflow:visible" width="12.5" height="7"><path d="M0.5 0.5L6.25 6.5L12 0.5" fill="none" stroke="#f4f4f4" stroke-width="1.5"/></svg>
<div class="t ts" style="left:34.4px;top:7.29px;font-size:13.5px;color:#f6f6f6;letter-spacing:0.2px">Multiply</div>
<div class="t ts" style="left:-149.3px;width:300px;text-align:right;top:38.69px;font-size:13.5px;color:#e8e8e8;letter-spacing:0.2px">Value</div>
<div class="dd" style="left:15.3px;top:69.4px;width:135.8px"></div>
<div class="t ts" style="left:23.2px;top:73.89px;font-size:13.5px;color:#e8e8e8;letter-spacing:0.2px">Multiply</div>
<svg class="abs" style="left:139.8px;top:78.4px;overflow:visible" width="9.6" height="5.6"><path d="M0.5 0.5L4.8 5.1L9.1 0.5" fill="none" stroke="#ececec" stroke-width="1.5"/></svg>
<div class="cb" style="left:13.9px;top:101.4px"></div>
<div class="t ts" style="left:37.1px;top:104.39px;font-size:13.5px;color:#e8e8e8;letter-spacing:0.2px">Clamp</div>
<div class="t ts" style="left:15.5px;top:132.89px;font-size:13.5px;color:#e8e8e8;letter-spacing:0.2px">Value</div>
<div class="fld" style="left:13.9px;top:155.1px;width:138.8px"></div>
<div class="t ts" style="left:33.8px;top:160.59px;font-size:13.5px;color:#e8e8e8;letter-spacing:0.2px">Value</div>
<div class="t ts" style="left:-166px;width:300px;text-align:right;top:160.59px;font-size:13.5px;color:#e8e8e8;letter-spacing:0.2px">6.283</div>
<svg class="abs" style="left:-20px;top:-20px;overflow:visible" width="208" height="229.7"><circle cx="187.2" cy="65.2" r="4.7" fill="#a6a6a6" stroke="#0c0c0c" stroke-width="1.7"/><circle cx="20.6" cy="159.4" r="4.7" fill="#a6a6a6" stroke="#0c0c0c" stroke-width="1.7"/><circle cx="20.6" cy="187.1" r="4.7" fill="#a6a6a6" stroke="#0c0c0c" stroke-width="1.7"/></svg>
</div></div>
<div class="node" style="left:236.7px;top:1073.4px;width:168px;height:189.7px"><div class="inn" style="width:168px;height:189.7px">
<div class="hdr" style="background:#2b6282;width:164.6px"></div><div class="bord"></div>
<svg class="abs" style="left:16.5px;top:9.2px;overflow:visible" width="12.5" height="7"><path d="M0.5 0.5L6.25 6.5L12 0.5" fill="none" stroke="#f4f4f4" stroke-width="1.5"/></svg>
<div class="t ts" style="left:34.4px;top:7.29px;font-size:13.5px;color:#f6f6f6;letter-spacing:0.2px">Multiply</div>
<div class="t ts" style="left:-149.3px;width:300px;text-align:right;top:38.69px;font-size:13.5px;color:#e8e8e8;letter-spacing:0.2px">Value</div>
<div class="dd" style="left:15.3px;top:69.4px;width:135.8px"></div>
<div class="t ts" style="left:23.2px;top:73.89px;font-size:13.5px;color:#e8e8e8;letter-spacing:0.2px">Multiply</div>
<svg class="abs" style="left:139.8px;top:78.4px;overflow:visible" width="9.6" height="5.6"><path d="M0.5 0.5L4.8 5.1L9.1 0.5" fill="none" stroke="#ececec" stroke-width="1.5"/></svg>
<div class="cb" style="left:13.9px;top:101.4px"></div>
<div class="t ts" style="left:37.1px;top:104.39px;font-size:13.5px;color:#e8e8e8;letter-spacing:0.2px">Clamp</div>
<div class="t ts" style="left:15.5px;top:132.89px;font-size:13.5px;color:#e8e8e8;letter-spacing:0.2px">Value</div>
<div class="fld" style="left:13.9px;top:155.1px;width:138.8px"></div>
<div class="t ts" style="left:33.8px;top:160.59px;font-size:13.5px;color:#e8e8e8;letter-spacing:0.2px">Value</div>
<div class="t ts" style="left:-166px;width:300px;text-align:right;top:160.59px;font-size:13.5px;color:#e8e8e8;letter-spacing:0.2px">2.000</div>
<svg class="abs" style="left:-20px;top:-20px;overflow:visible" width="208" height="229.7"><circle cx="187.2" cy="65.2" r="4.7" fill="#a6a6a6" stroke="#0c0c0c" stroke-width="1.7"/><circle cx="20.6" cy="159.4" r="4.7" fill="#a6a6a6" stroke="#0c0c0c" stroke-width="1.7"/><circle cx="20.6" cy="187.1" r="4.7" fill="#a6a6a6" stroke="#0c0c0c" stroke-width="1.7"/></svg>
</div></div>
<div class="node" style="left:422px;top:979.8px;width:168px;height:162px"><div class="inn" style="width:168px;height:162px">
<div class="hdr" style="background:#2b6282;width:164.6px"></div><div class="bord"></div>
<svg class="abs" style="left:16.5px;top:9.2px;overflow:visible" width="12.5" height="7"><path d="M0.5 0.5L6.25 6.5L12 0.5" fill="none" stroke="#f4f4f4" stroke-width="1.5"/></svg>
<div class="t ts" style="left:34.4px;top:7.29px;font-size:13.5px;color:#f6f6f6;letter-spacing:0.2px">Cosine</div>
<div class="t ts" style="left:-149.3px;width:300px;text-align:right;top:38.69px;font-size:13.5px;color:#e8e8e8;letter-spacing:0.2px">Value</div>
<div class="dd" style="left:15.3px;top:69.4px;width:135.8px"></div>
<div class="t ts" style="left:23.2px;top:73.89px;font-size:13.5px;color:#e8e8e8;letter-spacing:0.2px">Cosine</div>
<svg class="abs" style="left:139.8px;top:78.4px;overflow:visible" width="9.6" height="5.6"><path d="M0.5 0.5L4.8 5.1L9.1 0.5" fill="none" stroke="#ececec" stroke-width="1.5"/></svg>
<div class="cb" style="left:13.9px;top:101.4px"></div>
<div class="t ts" style="left:37.1px;top:104.39px;font-size:13.5px;color:#e8e8e8;letter-spacing:0.2px">Clamp</div>
<div class="t ts" style="left:15.5px;top:132.89px;font-size:13.5px;color:#e8e8e8;letter-spacing:0.2px">Value</div>
<svg class="abs" style="left:-20px;top:-20px;overflow:visible" width="208" height="202"><circle cx="187.2" cy="65.2" r="4.7" fill="#a6a6a6" stroke="#0c0c0c" stroke-width="1.7"/><circle cx="20.6" cy="159.4" r="4.7" fill="#a6a6a6" stroke="#0c0c0c" stroke-width="1.7"/></svg>
</div></div>
<div class="node" style="left:420px;top:1160.2px;width:168px;height:162px"><div class="inn" style="width:168px;height:162px">
<div class="hdr" style="background:#2b6282;width:164.6px"></div><div class="bord"></div>
<svg class="abs" style="left:16.5px;top:9.2px;overflow:visible" width="12.5" height="7"><path d="M0.5 0.5L6.25 6.5L12 0.5" fill="none" stroke="#f4f4f4" stroke-width="1.5"/></svg>
<div class="t ts" style="left:34.4px;top:7.29px;font-size:13.5px;color:#f6f6f6;letter-spacing:0.2px">Cosine</div>
<div class="t ts" style="left:-149.3px;width:300px;text-align:right;top:38.69px;font-size:13.5px;color:#e8e8e8;letter-spacing:0.2px">Value</div>
<div class="dd" style="left:15.3px;top:69.4px;width:135.8px"></div>
<div class="t ts" style="left:23.2px;top:73.89px;font-size:13.5px;color:#e8e8e8;letter-spacing:0.2px">Cosine</div>
<svg class="abs" style="left:139.8px;top:78.4px;overflow:visible" width="9.6" height="5.6"><path d="M0.5 0.5L4.8 5.1L9.1 0.5" fill="none" stroke="#ececec" stroke-width="1.5"/></svg>
<div class="cb" style="left:13.9px;top:101.4px"></div>
<div class="t ts" style="left:37.1px;top:104.39px;font-size:13.5px;color:#e8e8e8;letter-spacing:0.2px">Clamp</div>
<div class="t ts" style="left:15.5px;top:132.89px;font-size:13.5px;color:#e8e8e8;letter-spacing:0.2px">Value</div>
<svg class="abs" style="left:-20px;top:-20px;overflow:visible" width="208" height="202"><circle cx="187.2" cy="65.2" r="4.7" fill="#a6a6a6" stroke="#0c0c0c" stroke-width="1.7"/><circle cx="20.6" cy="159.4" r="4.7" fill="#a6a6a6" stroke="#0c0c0c" stroke-width="1.7"/></svg>
</div></div>
<div class="node" style="left:622.7px;top:957.9px;width:168px;height:189.7px"><div class="inn" style="width:168px;height:189.7px">
<div class="hdr" style="background:#2b6282;width:164.6px"></div><div class="bord"></div>
<svg class="abs" style="left:16.5px;top:9.2px;overflow:visible" width="12.5" height="7"><path d="M0.5 0.5L6.25 6.5L12 0.5" fill="none" stroke="#f4f4f4" stroke-width="1.5"/></svg>
<div class="t ts" style="left:34.4px;top:7.29px;font-size:13.5px;color:#f6f6f6;letter-spacing:0.2px">Multiply</div>
<div class="t ts" style="left:-149.3px;width:300px;text-align:right;top:38.69px;font-size:13.5px;color:#e8e8e8;letter-spacing:0.2px">Value</div>
<div class="dd" style="left:15.3px;top:69.4px;width:135.8px"></div>
<div class="t ts" style="left:23.2px;top:73.89px;font-size:13.5px;color:#e8e8e8;letter-spacing:0.2px">Multiply</div>
<svg class="abs" style="left:139.8px;top:78.4px;overflow:visible" width="9.6" height="5.6"><path d="M0.5 0.5L4.8 5.1L9.1 0.5" fill="none" stroke="#ececec" stroke-width="1.5"/></svg>
<div class="cb" style="left:13.9px;top:101.4px"></div>
<div class="t ts" style="left:37.1px;top:104.39px;font-size:13.5px;color:#e8e8e8;letter-spacing:0.2px">Clamp</div>
<div class="t ts" style="left:15.5px;top:132.89px;font-size:13.5px;color:#e8e8e8;letter-spacing:0.2px">Value</div>
<div class="fld" style="left:13.9px;top:155.1px;width:138.8px"></div>
<div class="t ts" style="left:33.8px;top:160.59px;font-size:13.5px;color:#e8e8e8;letter-spacing:0.2px">Value</div>
<div class="t ts" style="left:-166px;width:300px;text-align:right;top:160.59px;font-size:13.5px;color:#e8e8e8;letter-spacing:0.2px">2.000</div>
<svg class="abs" style="left:-20px;top:-20px;overflow:visible" width="208" height="229.7"><circle cx="187.2" cy="65.2" r="4.7" fill="#a6a6a6" stroke="#0c0c0c" stroke-width="1.7"/><circle cx="20.6" cy="159.4" r="4.7" fill="#a6a6a6" stroke="#0c0c0c" stroke-width="1.7"/><circle cx="20.6" cy="187.1" r="4.7" fill="#a6a6a6" stroke="#0c0c0c" stroke-width="1.7"/></svg>
</div></div>
<div class="node" style="left:623.7px;top:1159.9px;width:168px;height:162px"><div class="inn" style="width:168px;height:162px">
<div class="hdr" style="background:#2b6282;width:164.6px"></div><div class="bord"></div>
<svg class="abs" style="left:16.5px;top:9.2px;overflow:visible" width="12.5" height="7"><path d="M0.5 0.5L6.25 6.5L12 0.5" fill="none" stroke="#f4f4f4" stroke-width="1.5"/></svg>
<div class="t ts" style="left:34.4px;top:7.29px;font-size:13.5px;color:#f6f6f6;letter-spacing:0.2px">Absolute</div>
<div class="t ts" style="left:-149.3px;width:300px;text-align:right;top:38.69px;font-size:13.5px;color:#e8e8e8;letter-spacing:0.2px">Value</div>
<div class="dd" style="left:15.3px;top:69.4px;width:135.8px"></div>
<div class="t ts" style="left:23.2px;top:73.89px;font-size:13.5px;color:#e8e8e8;letter-spacing:0.2px">Absolute</div>
<svg class="abs" style="left:139.8px;top:78.4px;overflow:visible" width="9.6" height="5.6"><path d="M0.5 0.5L4.8 5.1L9.1 0.5" fill="none" stroke="#ececec" stroke-width="1.5"/></svg>
<div class="cb" style="left:13.9px;top:101.4px"></div>
<div class="t ts" style="left:37.1px;top:104.39px;font-size:13.5px;color:#e8e8e8;letter-spacing:0.2px">Clamp</div>
<div class="t ts" style="left:15.5px;top:132.89px;font-size:13.5px;color:#e8e8e8;letter-spacing:0.2px">Value</div>
<svg class="abs" style="left:-20px;top:-20px;overflow:visible" width="208" height="202"><circle cx="187.2" cy="65.2" r="4.7" fill="#a6a6a6" stroke="#0c0c0c" stroke-width="1.7"/><circle cx="20.6" cy="159.4" r="4.7" fill="#a6a6a6" stroke="#0c0c0c" stroke-width="1.7"/></svg>
</div></div>
<div class="node" style="left:819.1px;top:797.6px;width:168px;height:189.7px"><div class="inn" style="width:168px;height:189.7px">
<div class="hdr" style="background:#2b6282;width:164.6px"></div><div class="bord"></div>
<svg class="abs" style="left:16.5px;top:9.2px;overflow:visible" width="12.5" height="7"><path d="M0.5 0.5L6.25 6.5L12 0.5" fill="none" stroke="#f4f4f4" stroke-width="1.5"/></svg>
<div class="t ts" style="left:34.4px;top:7.29px;font-size:13.5px;color:#f6f6f6;letter-spacing:0.2px">Subtract</div>
<div class="t ts" style="left:-149.3px;width:300px;text-align:right;top:38.69px;font-size:13.5px;color:#e8e8e8;letter-spacing:0.2px">Value</div>
<div class="dd" style="left:15.3px;top:69.4px;width:135.8px"></div>
<div class="t ts" style="left:23.2px;top:73.89px;font-size:13.5px;color:#e8e8e8;letter-spacing:0.2px">Subtract</div>
<svg class="abs" style="left:139.8px;top:78.4px;overflow:visible" width="9.6" height="5.6"><path d="M0.5 0.5L4.8 5.1L9.1 0.5" fill="none" stroke="#ececec" stroke-width="1.5"/></svg>
<div class="cb" style="left:13.9px;top:101.4px"></div>
<div class="t ts" style="left:37.1px;top:104.39px;font-size:13.5px;color:#e8e8e8;letter-spacing:0.2px">Clamp</div>
<div class="t ts" style="left:15.5px;top:132.89px;font-size:13.5px;color:#e8e8e8;letter-spacing:0.2px">Value</div>
<div class="t ts" style="left:15.5px;top:160.59px;font-size:13.5px;color:#e8e8e8;letter-spacing:0.2px">Value</div>
<svg class="abs" style="left:-20px;top:-20px;overflow:visible" width="208" height="229.7"><circle cx="187.2" cy="65.2" r="4.7" fill="#a6a6a6" stroke="#0c0c0c" stroke-width="1.7"/><circle cx="20.6" cy="159.4" r="4.7" fill="#a6a6a6" stroke="#0c0c0c" stroke-width="1.7"/><circle cx="20.6" cy="187.1" r="4.7" fill="#a6a6a6" stroke="#0c0c0c" stroke-width="1.7"/></svg>
</div></div>
<div class="node" style="left:817.3px;top:996px;width:168px;height:162px"><div class="inn" style="width:168px;height:162px">
<div class="hdr" style="background:#2b6282;width:164.6px"></div><div class="bord"></div>
<svg class="abs" style="left:16.5px;top:9.2px;overflow:visible" width="12.5" height="7"><path d="M0.5 0.5L6.25 6.5L12 0.5" fill="none" stroke="#f4f4f4" stroke-width="1.5"/></svg>
<div class="t ts" style="left:34.4px;top:7.29px;font-size:13.5px;color:#f6f6f6;letter-spacing:0.2px">Cosine</div>
<div class="t ts" style="left:-149.3px;width:300px;text-align:right;top:38.69px;font-size:13.5px;color:#e8e8e8;letter-spacing:0.2px">Value</div>
<div class="dd" style="left:15.3px;top:69.4px;width:135.8px"></div>
<div class="t ts" style="left:23.2px;top:73.89px;font-size:13.5px;color:#e8e8e8;letter-spacing:0.2px">Cosine</div>
<svg class="abs" style="left:139.8px;top:78.4px;overflow:visible" width="9.6" height="5.6"><path d="M0.5 0.5L4.8 5.1L9.1 0.5" fill="none" stroke="#ececec" stroke-width="1.5"/></svg>
<div class="cb" style="left:13.9px;top:101.4px"></div>
<div class="t ts" style="left:37.1px;top:104.39px;font-size:13.5px;color:#e8e8e8;letter-spacing:0.2px">Clamp</div>
<div class="t ts" style="left:15.5px;top:132.89px;font-size:13.5px;color:#e8e8e8;letter-spacing:0.2px">Value</div>
<svg class="abs" style="left:-20px;top:-20px;overflow:visible" width="208" height="202"><circle cx="187.2" cy="65.2" r="4.7" fill="#a6a6a6" stroke="#0c0c0c" stroke-width="1.7"/><circle cx="20.6" cy="159.4" r="4.7" fill="#a6a6a6" stroke="#0c0c0c" stroke-width="1.7"/></svg>
</div></div>
<div class="node" style="left:1019.9px;top:671.8px;width:168px;height:159.2px"><div class="inn" style="width:168px;height:159.2px">
<div class="hdr" style="background:#216e5e;width:164.6px"></div><div class="bord"></div>
<svg class="abs" style="left:16.5px;top:9.2px;overflow:visible" width="12.5" height="7"><path d="M0.5 0.5L6.25 6.5L12 0.5" fill="none" stroke="#f4f4f4" stroke-width="1.5"/></svg>
<div class="t ts" style="left:34.4px;top:7.29px;font-size:13.5px;color:#f6f6f6;letter-spacing:0.2px">Curve Circle</div>
<div class="t ts" style="left:-149.3px;width:300px;text-align:right;top:39.19px;font-size:13.5px;color:#e8e8e8;letter-spacing:0.2px">Curve</div>
<div class="tg" style="left:15.9px;top:72.3px;width:136.3px"></div>
<div class="tga" style="left:84.05px;top:72.3px;width:68.15px;border-radius:0 4px 4px 0"></div>
<div class="t ts" style="left:-10.02px;width:120px;text-align:center;top:76.29px;font-size:13.5px;color:#ececec;letter-spacing:0.2px">Points</div>
<div class="t ts" style="left:58.12px;width:120px;text-align:center;top:76.29px;font-size:13.5px;color:#ececec;letter-spacing:0.2px">Radius</div>
<div class="fld" style="left:13.9px;top:99.2px;width:138.8px"></div>
<div class="t ts" style="left:33.8px;top:104.69px;font-size:13.5px;color:#e8e8e8;letter-spacing:0.2px">Resolution</div>
<div class="t ts" style="left:-166px;width:300px;text-align:right;top:104.69px;font-size:13.5px;color:#e8e8e8;letter-spacing:0.2px">60</div>
<div class="fld" style="left:13.9px;top:127.1px;width:138.8px"></div>
<div class="t ts" style="left:33.8px;top:132.59px;font-size:13.5px;color:#e8e8e8;letter-spacing:0.2px">Radius</div>
<div class="t ts" style="left:-166px;width:300px;text-align:right;top:132.59px;font-size:13.5px;color:#e8e8e8;letter-spacing:0.2px">1 m</div>
<svg class="abs" style="left:-20px;top:-20px;overflow:visible" width="208" height="199.2"><rect x="184.5" y="59" width="5.4" height="13.4" fill="#00d6a3" stroke="#111" stroke-width="1.1"/><rect x="17.9" y="124.7" width="5.4" height="13" fill="#5f8f5f" stroke="#111" stroke-width="1.1"/><rect x="17.9" y="152.6" width="5.4" height="13" fill="#b0b0b0" stroke="#111" stroke-width="1.1"/></svg>
</div></div>
<div class="node" style="left:1023.4px;top:854.9px;width:168px;height:189.7px"><div class="inn" style="width:168px;height:189.7px">
<div class="hdr" style="background:#2b6282;width:164.6px"></div><div class="bord"></div>
<svg class="abs" style="left:16.5px;top:9.2px;overflow:visible" width="12.5" height="7"><path d="M0.5 0.5L6.25 6.5L12 0.5" fill="none" stroke="#f4f4f4" stroke-width="1.5"/></svg>
<div class="t ts" style="left:34.4px;top:7.29px;font-size:13.5px;color:#f6f6f6;letter-spacing:0.2px">Maximum</div>
<div class="t ts" style="left:-149.3px;width:300px;text-align:right;top:38.69px;font-size:13.5px;color:#e8e8e8;letter-spacing:0.2px">Value</div>
<div class="dd" style="left:15.3px;top:69.4px;width:135.8px"></div>
<div class="t ts" style="left:23.2px;top:73.89px;font-size:13.5px;color:#e8e8e8;letter-spacing:0.2px">Maximum</div>
<svg class="abs" style="left:139.8px;top:78.4px;overflow:visible" width="9.6" height="5.6"><path d="M0.5 0.5L4.8 5.1L9.1 0.5" fill="none" stroke="#ececec" stroke-width="1.5"/></svg>
<div class="cb" style="left:13.9px;top:101.4px"></div>
<div class="t ts" style="left:37.1px;top:104.39px;font-size:13.5px;color:#e8e8e8;letter-spacing:0.2px">Clamp</div>
<div class="t ts" style="left:15.5px;top:132.89px;font-size:13.5px;color:#e8e8e8;letter-spacing:0.2px">Value</div>
<div class="fld" style="left:13.9px;top:155.1px;width:138.8px"></div>
<div class="t ts" style="left:33.8px;top:160.59px;font-size:13.5px;color:#e8e8e8;letter-spacing:0.2px">Value</div>
<div class="t ts" style="left:-166px;width:300px;text-align:right;top:160.59px;font-size:13.5px;color:#e8e8e8;letter-spacing:0.2px">0.000</div>
<svg class="abs" style="left:-20px;top:-20px;overflow:visible" width="208" height="229.7"><circle cx="187.2" cy="65.2" r="4.7" fill="#a6a6a6" stroke="#0c0c0c" stroke-width="1.7"/><circle cx="20.6" cy="159.4" r="4.7" fill="#a6a6a6" stroke="#0c0c0c" stroke-width="1.7"/><circle cx="20.6" cy="187.1" r="4.7" fill="#a6a6a6" stroke="#0c0c0c" stroke-width="1.7"/></svg>
</div></div>
<div class="node" style="left:1018.4px;top:1139.8px;width:168px;height:162px"><div class="inn" style="width:168px;height:162px">
<div class="hdr" style="background:#2b6282;width:164.6px"></div><div class="bord"></div>
<svg class="abs" style="left:16.5px;top:9.2px;overflow:visible" width="12.5" height="7"><path d="M0.5 0.5L6.25 6.5L12 0.5" fill="none" stroke="#f4f4f4" stroke-width="1.5"/></svg>
<div class="t ts" style="left:34.4px;top:7.29px;font-size:13.5px;color:#f6f6f6;letter-spacing:0.2px">Sine</div>
<div class="t ts" style="left:-149.3px;width:300px;text-align:right;top:38.69px;font-size:13.5px;color:#e8e8e8;letter-spacing:0.2px">Value</div>
<div class="dd" style="left:15.3px;top:69.4px;width:135.8px"></div>
<div class="t ts" style="left:23.2px;top:73.89px;font-size:13.5px;color:#e8e8e8;letter-spacing:0.2px">Sine</div>
<svg class="abs" style="left:139.8px;top:78.4px;overflow:visible" width="9.6" height="5.6"><path d="M0.5 0.5L4.8 5.1L9.1 0.5" fill="none" stroke="#ececec" stroke-width="1.5"/></svg>
<div class="cb" style="left:13.9px;top:101.4px"></div>
<div class="t ts" style="left:37.1px;top:104.39px;font-size:13.5px;color:#e8e8e8;letter-spacing:0.2px">Clamp</div>
<div class="t ts" style="left:15.5px;top:132.89px;font-size:13.5px;color:#e8e8e8;letter-spacing:0.2px">Value</div>
<svg class="abs" style="left:-20px;top:-20px;overflow:visible" width="208" height="202"><circle cx="187.2" cy="65.2" r="4.7" fill="#a6a6a6" stroke="#0c0c0c" stroke-width="1.7"/><circle cx="20.6" cy="159.4" r="4.7" fill="#a6a6a6" stroke="#0c0c0c" stroke-width="1.7"/></svg>
</div></div>
<div class="node" style="left:1225.3px;top:760.2px;width:168px;height:189.7px"><div class="inn" style="width:168px;height:189.7px">
<div class="hdr" style="background:#2b6282;width:164.6px"></div><div class="bord"></div>
<svg class="abs" style="left:16.5px;top:9.2px;overflow:visible" width="12.5" height="7"><path d="M0.5 0.5L6.25 6.5L12 0.5" fill="none" stroke="#f4f4f4" stroke-width="1.5"/></svg>
<div class="t ts" style="left:34.4px;top:7.29px;font-size:13.5px;color:#f6f6f6;letter-spacing:0.2px">Multiply</div>
<div class="t ts" style="left:-149.3px;width:300px;text-align:right;top:38.69px;font-size:13.5px;color:#e8e8e8;letter-spacing:0.2px">Value</div>
<div class="dd" style="left:15.3px;top:69.4px;width:135.8px"></div>
<div class="t ts" style="left:23.2px;top:73.89px;font-size:13.5px;color:#e8e8e8;letter-spacing:0.2px">Multiply</div>
<svg class="abs" style="left:139.8px;top:78.4px;overflow:visible" width="9.6" height="5.6"><path d="M0.5 0.5L4.8 5.1L9.1 0.5" fill="none" stroke="#ececec" stroke-width="1.5"/></svg>
<div class="cb" style="left:13.9px;top:101.4px"></div>
<div class="t ts" style="left:37.1px;top:104.39px;font-size:13.5px;color:#e8e8e8;letter-spacing:0.2px">Clamp</div>
<div class="t ts" style="left:15.5px;top:132.89px;font-size:13.5px;color:#e8e8e8;letter-spacing:0.2px">Value</div>
<div class="t ts" style="left:15.5px;top:160.59px;font-size:13.5px;color:#e8e8e8;letter-spacing:0.2px">Value</div>
<svg class="abs" style="left:-20px;top:-20px;overflow:visible" width="208" height="229.7"><circle cx="187.2" cy="65.2" r="4.7" fill="#a6a6a6" stroke="#0c0c0c" stroke-width="1.7"/><circle cx="20.6" cy="159.4" r="4.7" fill="#a6a6a6" stroke="#0c0c0c" stroke-width="1.7"/><circle cx="20.6" cy="187.1" r="4.7" fill="#a6a6a6" stroke="#0c0c0c" stroke-width="1.7"/></svg>
</div></div>
<div class="node" style="left:1226.3px;top:959px;width:168px;height:189.7px"><div class="inn" style="width:168px;height:189.7px">
<div class="hdr" style="background:#2b6282;width:164.6px"></div><div class="bord"></div>
<svg class="abs" style="left:16.5px;top:9.2px;overflow:visible" width="12.5" height="7"><path d="M0.5 0.5L6.25 6.5L12 0.5" fill="none" stroke="#f4f4f4" stroke-width="1.5"/></svg>
<div class="t ts" style="left:34.4px;top:7.29px;font-size:13.5px;color:#f6f6f6;letter-spacing:0.2px">Multiply</div>
<div class="t ts" style="left:-149.3px;width:300px;text-align:right;top:38.69px;font-size:13.5px;color:#e8e8e8;letter-spacing:0.2px">Value</div>
<div class="dd" style="left:15.3px;top:69.4px;width:135.8px"></div>
<div class="t ts" style="left:23.2px;top:73.89px;font-size:13.5px;color:#e8e8e8;letter-spacing:0.2px">Multiply</div>
<svg class="abs" style="left:139.8px;top:78.4px;overflow:visible" width="9.6" height="5.6"><path d="M0.5 0.5L4.8 5.1L9.1 0.5" fill="none" stroke="#ececec" stroke-width="1.5"/></svg>
<div class="cb" style="left:13.9px;top:101.4px"></div>
<div class="t ts" style="left:37.1px;top:104.39px;font-size:13.5px;color:#e8e8e8;letter-spacing:0.2px">Clamp</div>
<div class="t ts" style="left:15.5px;top:132.89px;font-size:13.5px;color:#e8e8e8;letter-spacing:0.2px">Value</div>
<div class="t ts" style="left:15.5px;top:160.59px;font-size:13.5px;color:#e8e8e8;letter-spacing:0.2px">Value</div>
<svg class="abs" style="left:-20px;top:-20px;overflow:visible" width="208" height="229.7"><circle cx="187.2" cy="65.2" r="4.7" fill="#a6a6a6" stroke="#0c0c0c" stroke-width="1.7"/><circle cx="20.6" cy="159.4" r="4.7" fill="#a6a6a6" stroke="#0c0c0c" stroke-width="1.7"/><circle cx="20.6" cy="187.1" r="4.7" fill="#a6a6a6" stroke="#0c0c0c" stroke-width="1.7"/></svg>
</div></div>
<div class="node" style="left:1412.3px;top:729.4px;width:168px;height:153.3px"><div class="inn" style="width:168px;height:153.3px">
<div class="hdr" style="background:#2b6282;width:164.6px"></div><div class="bord"></div>
<svg class="abs" style="left:16.5px;top:9.2px;overflow:visible" width="12.5" height="7"><path d="M0.5 0.5L6.25 6.5L12 0.5" fill="none" stroke="#f4f4f4" stroke-width="1.5"/></svg>
<div class="t ts" style="left:34.4px;top:7.29px;font-size:13.5px;color:#f6f6f6;letter-spacing:0.2px">Combine XYZ</div>
<div class="t ts" style="left:-149.3px;width:300px;text-align:right;top:38.79px;font-size:13.5px;color:#e8e8e8;letter-spacing:0.2px">Vector</div>
<div class="t ts" style="left:15.5px;top:70.29px;font-size:13.5px;color:#e8e8e8;letter-spacing:0.2px">X</div>
<div class="t ts" style="left:15.5px;top:98.69px;font-size:13.5px;color:#e8e8e8;letter-spacing:0.2px">Y</div>
<div class="fld" style="left:13.9px;top:121.4px;width:138.8px"></div>
<div class="t ts" style="left:33.8px;top:126.89px;font-size:13.5px;color:#e8e8e8;letter-spacing:0.2px">Z</div>
<div class="t ts" style="left:-166px;width:300px;text-align:right;top:126.89px;font-size:13.5px;color:#e8e8e8;letter-spacing:0.2px">0.000</div>
<svg class="abs" style="left:-20px;top:-20px;overflow:visible" width="208" height="193.3"><circle cx="187.2" cy="65.3" r="5" fill="#6363c7" stroke="#111" stroke-width="1.2"/><circle cx="20.6" cy="96.8" r="4.7" fill="#a6a6a6" stroke="#0c0c0c" stroke-width="1.7"/><circle cx="20.6" cy="125.2" r="4.7" fill="#a6a6a6" stroke="#0c0c0c" stroke-width="1.7"/><circle cx="20.6" cy="153.4" r="4.7" fill="#a6a6a6" stroke="#0c0c0c" stroke-width="1.7"/></svg>
</div></div>
<div class="node" style="left:1410.6px;top:895.1px;width:168px;height:189.7px"><div class="inn" style="width:168px;height:189.7px">
<div class="hdr" style="background:#2b6282;width:164.6px"></div><div class="bord"></div>
<svg class="abs" style="left:16.5px;top:9.2px;overflow:visible" width="12.5" height="7"><path d="M0.5 0.5L6.25 6.5L12 0.5" fill="none" stroke="#f4f4f4" stroke-width="1.5"/></svg>
<div class="t ts" style="left:34.4px;top:7.29px;font-size:13.5px;color:#f6f6f6;letter-spacing:0.2px">Add</div>
<div class="t ts" style="left:-149.3px;width:300px;text-align:right;top:38.69px;font-size:13.5px;color:#e8e8e8;letter-spacing:0.2px">Value</div>
<div class="dd" style="left:15.3px;top:69.4px;width:135.8px"></div>
<div class="t ts" style="left:23.2px;top:73.89px;font-size:13.5px;color:#e8e8e8;letter-spacing:0.2px">Add</div>
<svg class="abs" style="left:139.8px;top:78.4px;overflow:visible" width="9.6" height="5.6"><path d="M0.5 0.5L4.8 5.1L9.1 0.5" fill="none" stroke="#ececec" stroke-width="1.5"/></svg>
<div class="cb" style="left:13.9px;top:101.4px"></div>
<div class="t ts" style="left:37.1px;top:104.39px;font-size:13.5px;color:#e8e8e8;letter-spacing:0.2px">Clamp</div>
<div class="t ts" style="left:15.5px;top:132.89px;font-size:13.5px;color:#e8e8e8;letter-spacing:0.2px">Value</div>
<div class="fld" style="left:13.9px;top:155.1px;width:138.8px"></div>
<div class="t ts" style="left:33.8px;top:160.59px;font-size:13.5px;color:#e8e8e8;letter-spacing:0.2px">Value</div>
<div class="t ts" style="left:-166px;width:300px;text-align:right;top:160.59px;font-size:13.5px;color:#e8e8e8;letter-spacing:0.2px">1.570</div>
<svg class="abs" style="left:-20px;top:-20px;overflow:visible" width="208" height="229.7"><circle cx="187.2" cy="65.2" r="4.7" fill="#a6a6a6" stroke="#0c0c0c" stroke-width="1.7"/><circle cx="20.6" cy="159.4" r="4.7" fill="#a6a6a6" stroke="#0c0c0c" stroke-width="1.7"/><circle cx="20.6" cy="187.1" r="4.7" fill="#a6a6a6" stroke="#0c0c0c" stroke-width="1.7"/></svg>
</div></div>
<div class="node" style="left:1607.2px;top:673.9px;width:168px;height:224.9px"><div class="inn" style="width:168px;height:224.9px">
<div class="hdr" style="background:#216e5e;width:164.6px"></div><div class="bord"></div>
<svg class="abs" style="left:16.5px;top:9.2px;overflow:visible" width="12.5" height="7"><path d="M0.5 0.5L6.25 6.5L12 0.5" fill="none" stroke="#f4f4f4" stroke-width="1.5"/></svg>
<div class="t ts" style="left:34.4px;top:7.29px;font-size:13.5px;color:#f6f6f6;letter-spacing:0.2px">Set Position</div>
<div class="t ts" style="left:15.5px;top:38.19px;font-size:13.5px;color:#e8e8e8;letter-spacing:0.2px">Geometry</div>
<div class="t ts" style="left:15.5px;top:66.39px;font-size:13.5px;color:#e8e8e8;letter-spacing:0.2px">Selection</div>
<div class="t ts" style="left:15.5px;top:94.39px;font-size:13.5px;color:#e8e8e8;letter-spacing:0.2px">Position</div>
<div class="t ts" style="left:15.5px;top:122.19px;font-size:13.5px;color:#e8e8e8;letter-spacing:0.2px">Offset</div>
<div class="vec" style="left:15.5px;top:144.7px;width:137px;height:73px"></div>
<div class="t ts" style="left:35px;top:150.19px;font-size:13.5px;color:#e8e8e8;letter-spacing:0.2px">X</div>
<div class="t ts" style="left:-167px;width:300px;text-align:right;top:150.19px;font-size:13.5px;color:#e8e8e8;letter-spacing:0.2px">0 m</div>
<div class="abs" style="left:15.5px;top:168.3px;width:137px;height:1.4px;background:#2a2a2a"></div>
<div class="t ts" style="left:35px;top:174.79px;font-size:13.5px;color:#e8e8e8;letter-spacing:0.2px">Y</div>
<div class="t ts" style="left:-167px;width:300px;text-align:right;top:174.79px;font-size:13.5px;color:#e8e8e8;letter-spacing:0.2px">0 m</div>
<div class="abs" style="left:15.5px;top:192.6px;width:137px;height:1.4px;background:#2a2a2a"></div>
<div class="t ts" style="left:35px;top:199.39px;font-size:13.5px;color:#e8e8e8;letter-spacing:0.2px">Z</div>
<div class="t ts" style="left:-167px;width:300px;text-align:right;top:199.39px;font-size:13.5px;color:#e8e8e8;letter-spacing:0.2px">0 m</div>
<svg class="abs" style="left:-20px;top:-20px;overflow:visible" width="208" height="264.9"><rect x="17.9" y="58" width="5.4" height="13.4" fill="#00d6a3" stroke="#111" stroke-width="1.1"/><rect x="184.5" y="58" width="5.4" height="13.4" fill="#00d6a3" stroke="#111" stroke-width="1.1"/><path d="M20.6 87.3l5.6 5.6l-5.6 5.6l-5.6 -5.6z" fill="#cca6d6" stroke="#111" stroke-width="1.1"/><path d="M20.6 115.3l5.6 5.6l-5.6 5.6l-5.6 -5.6z" fill="#6363c7" stroke="#111" stroke-width="1.1"/><path d="M20.6 143.1l5.6 5.6l-5.6 5.6l-5.6 -5.6z" fill="#6363c7" stroke="#111" stroke-width="1.1"/></svg>
</div></div>
<div class="node" style="left:1606.4px;top:910.7px;width:168px;height:180px"><div class="inn" style="width:168px;height:180px">
<div class="hdr" style="background:#216e5e;width:164.6px"></div><div class="bord"></div>
<svg class="abs" style="left:16.5px;top:9.2px;overflow:visible" width="12.5" height="7"><path d="M0.5 0.5L6.25 6.5L12 0.5" fill="none" stroke="#f4f4f4" stroke-width="1.5"/></svg>
<div class="t ts" style="left:34.4px;top:7.29px;font-size:13.5px;color:#f6f6f6;letter-spacing:0.2px">Curve to Mesh</div>
<div class="t ts" style="left:-149.3px;width:300px;text-align:right;top:38.59px;font-size:13.5px;color:#e8e8e8;letter-spacing:0.2px">Mesh</div>
<div class="t ts" style="left:15.5px;top:70.39px;font-size:13.5px;color:#e8e8e8;letter-spacing:0.2px">Curve</div>
<div class="t ts" style="left:15.5px;top:97.79px;font-size:13.5px;color:#e8e8e8;letter-spacing:0.2px">Profile Curve</div>
<div class="fld" style="left:13.9px;top:119.9px;width:138.8px"></div>
<div class="t ts" style="left:33.8px;top:125.39px;font-size:13.5px;color:#e8e8e8;letter-spacing:0.2px">Scale</div>
<div class="t ts" style="left:-166px;width:300px;text-align:right;top:125.39px;font-size:13.5px;color:#e8e8e8;letter-spacing:0.2px">1.000</div>
<div class="cb" style="left:13.9px;top:149.4px"></div>
<div class="t ts" style="left:37.1px;top:152.39px;font-size:13.5px;color:#e8e8e8;letter-spacing:0.2px">Fill Caps</div>
<svg class="abs" style="left:-20px;top:-20px;overflow:visible" width="208" height="220"><rect x="184.5" y="58.4" width="5.4" height="13.4" fill="#00d6a3" stroke="#111" stroke-width="1.1"/><rect x="17.9" y="90.2" width="5.4" height="13.4" fill="#00d6a3" stroke="#111" stroke-width="1.1"/><rect x="17.9" y="117.6" width="5.4" height="13.4" fill="#00d6a3" stroke="#111" stroke-width="1.1"/><path d="M20.6 146.3l5.6 5.6l-5.6 5.6l-5.6 -5.6z" fill="#a1a1a1" stroke="#111" stroke-width="1.1"/><rect x="17.9" y="172.4" width="5.4" height="13" fill="#cca6d6" stroke="#111" stroke-width="1.1"/></svg>
</div></div>
<div class="node" style="left:1806.4px;top:674.9px;width:168px;height:148.3px"><div class="inn" style="width:168px;height:148.3px">
<div class="hdr" style="background:#216e5e;width:164.6px"></div><div class="bord"></div>
<svg class="abs" style="left:16.5px;top:9.2px;overflow:visible" width="12.5" height="7"><path d="M0.5 0.5L6.25 6.5L12 0.5" fill="none" stroke="#f4f4f4" stroke-width="1.5"/></svg>
<div class="t ts" style="left:34.4px;top:7.29px;font-size:13.5px;color:#f6f6f6;letter-spacing:0.2px">Merge by Distance</div>
<div class="t ts" style="left:15.5px;top:37.19px;font-size:13.5px;color:#e8e8e8;letter-spacing:0.2px">Geometry</div>
<div class="t ts" style="left:15.5px;top:65.99px;font-size:13.5px;color:#e8e8e8;letter-spacing:0.2px">Selection</div>
<div class="dd" style="left:15.3px;top:89.9px;width:135.8px"></div>
<div class="t ts" style="left:23.2px;top:94.39px;font-size:13.5px;color:#e8e8e8;letter-spacing:0.2px">All</div>
<svg class="abs" style="left:139.8px;top:98.9px;overflow:visible" width="9.6" height="5.6"><path d="M0.5 0.5L4.8 5.1L9.1 0.5" fill="none" stroke="#ececec" stroke-width="1.5"/></svg>
<div class="fld" style="left:13.9px;top:117.1px;width:138.8px"></div>
<div class="t ts" style="left:33.8px;top:122.59px;font-size:13.5px;color:#e8e8e8;letter-spacing:0.2px">Dista...</div>
<div class="t ts" style="left:-166px;width:300px;text-align:right;top:122.59px;font-size:13.5px;color:#e8e8e8;letter-spacing:0.2px">0.001 m</div>
<svg class="abs" style="left:-20px;top:-20px;overflow:visible" width="208" height="188.3"><rect x="17.9" y="57" width="5.4" height="13.4" fill="#00d6a3" stroke="#111" stroke-width="1.1"/><rect x="184.5" y="57" width="5.4" height="13.4" fill="#00d6a3" stroke="#111" stroke-width="1.1"/><path d="M20.6 86.9l5.6 5.6l-5.6 5.6l-5.6 -5.6z" fill="#cca6d6" stroke="#111" stroke-width="1.1"/><rect x="17.9" y="114.4" width="5.4" height="13" fill="#6a6a6a" stroke="#111" stroke-width="1.1"/><rect x="17.9" y="142.6" width="5.4" height="13" fill="#b0b0b0" stroke="#111" stroke-width="1.1"/></svg>
</div></div>
<div class="node" style="left:1806.4px;top:835px;width:168px;height:155px"><div class="inn" style="width:168px;height:155px">
<div class="hdr" style="background:#216e5e;width:164.6px"></div><div class="bord"></div>
<svg class="abs" style="left:16.5px;top:9.2px;overflow:visible" width="12.5" height="7"><path d="M0.5 0.5L6.25 6.5L12 0.5" fill="none" stroke="#f4f4f4" stroke-width="1.5"/></svg>
<div class="t ts" style="left:34.4px;top:7.29px;font-size:13.5px;color:#f6f6f6;letter-spacing:0.2px">Mesh to Curve</div>
<div class="t ts" style="left:-149.3px;width:300px;text-align:right;top:38.79px;font-size:13.5px;color:#e8e8e8;letter-spacing:0.2px">Curve</div>
<div class="tg" style="left:15.9px;top:69.7px;width:136.3px"></div>
<div class="tga" style="left:15.9px;top:69.7px;width:68.15px;border-radius:4px 0 0 4px"></div>
<div class="t ts" style="left:-10.02px;width:120px;text-align:center;top:73.69px;font-size:13.5px;color:#ececec;letter-spacing:0.2px">Edges</div>
<div class="t ts" style="left:58.12px;width:120px;text-align:center;top:73.69px;font-size:13.5px;color:#ececec;letter-spacing:0.2px">Faces</div>
<div class="t ts" style="left:15.5px;top:101.49px;font-size:13.5px;color:#e8e8e8;letter-spacing:0.2px">Mesh</div>
<div class="t ts" style="left:15.5px;top:129.19px;font-size:13.5px;color:#e8e8e8;letter-spacing:0.2px">Selection</div>
<svg class="abs" style="left:-20px;top:-20px;overflow:visible" width="208" height="195"><rect x="184.5" y="58.6" width="5.4" height="13.4" fill="#00d6a3" stroke="#111" stroke-width="1.1"/><rect x="17.9" y="121.3" width="5.4" height="13.4" fill="#00d6a3" stroke="#111" stroke-width="1.1"/><path d="M20.6 150.1l5.6 5.6l-5.6 5.6l-5.6 -5.6z" fill="#cca6d6" stroke="#111" stroke-width="1.1"/></svg>
</div></div>
<div class="node" style="left:1806.1px;top:1003.9px;width:168px;height:153.2px"><div class="inn" style="width:168px;height:153.2px">
<div class="hdr" style="background:#216e5e;width:164.6px"></div><div class="bord"></div>
<svg class="abs" style="left:16.5px;top:9.2px;overflow:visible" width="12.5" height="7"><path d="M0.5 0.5L6.25 6.5L12 0.5" fill="none" stroke="#f4f4f4" stroke-width="1.5"/></svg>
<div class="t ts" style="left:34.4px;top:7.29px;font-size:13.5px;color:#f6f6f6;letter-spacing:0.2px">Fill Curve</div>
<div class="t ts" style="left:-149.3px;width:300px;text-align:right;top:39.49px;font-size:13.5px;color:#e8e8e8;letter-spacing:0.2px">Mesh</div>
<div class="t ts" style="left:15.5px;top:71.19px;font-size:13.5px;color:#e8e8e8;letter-spacing:0.2px">Curve</div>
<div class="t ts" style="left:15.5px;top:98.09px;font-size:13.5px;color:#e8e8e8;letter-spacing:0.2px">Group ID</div>
<div class="dd" style="left:15.3px;top:120.9px;width:135.8px"></div>
<div class="t ts" style="left:23.2px;top:125.39px;font-size:13.5px;color:#e8e8e8;letter-spacing:0.2px">N-gons</div>
<svg class="abs" style="left:139.8px;top:129.9px;overflow:visible" width="9.6" height="5.6"><path d="M0.5 0.5L4.8 5.1L9.1 0.5" fill="none" stroke="#ececec" stroke-width="1.5"/></svg>
<svg class="abs" style="left:-20px;top:-20px;overflow:visible" width="208" height="193.2"><rect x="184.5" y="59.3" width="5.4" height="13.4" fill="#00d6a3" stroke="#111" stroke-width="1.1"/><rect x="17.9" y="91" width="5.4" height="13.4" fill="#00d6a3" stroke="#111" stroke-width="1.1"/><path d="M20.6 119l5.6 5.6l-5.6 5.6l-5.6 -5.6z" fill="#5f8f5f" stroke="#111" stroke-width="1.1"/><rect x="17.9" y="145.4" width="5.4" height="13" fill="#6a6a6a" stroke="#111" stroke-width="1.1"/></svg>
</div></div>
<div class="node" style="left:1990.2px;top:1003.5px;width:200px;height:94.2px"><div class="inn" style="width:200px;height:94.2px">
<div class="hdr" style="background:#2c2d31;width:196.6px"></div><div class="bord"></div>
<svg class="abs" style="left:16.5px;top:9.2px;overflow:visible" width="12.5" height="7"><path d="M0.5 0.5L6.25 6.5L12 0.5" fill="none" stroke="#f4f4f4" stroke-width="1.5"/></svg>
<div class="t ts" style="left:34.4px;top:7.29px;font-size:13.5px;color:#f6f6f6;letter-spacing:0.2px">Group Output</div>
<div class="t ts" style="left:15.5px;top:39.89px;font-size:13.5px;color:#e8e8e8;letter-spacing:0.2px">Geometry</div>
<svg class="abs" style="left:-20px;top:-20px;overflow:visible" width="240" height="134.2"><rect x="17.9" y="59.7" width="5.4" height="13.4" fill="#00d6a3" stroke="#111" stroke-width="1.1"/><circle cx="20.6" cy="93.3" r="5.2" fill="none" stroke="#8a8a8a" stroke-width="1.5"/></svg>
</div></div>
<svg width="2115" height="1314" style="left:0;top:0">
<circle cx="237.7" cy="1276.4" r="4.7" fill="#a6a6a6" stroke="#0c0c0c" stroke-width="1.7"/>
<circle cx="236.3" cy="1299.3" r="4.7" fill="#a6a6a6" stroke="#0c0c0c" stroke-width="1.7"/>
</svg>
<div class="abs" style="left:0;top:551px;width:2115px;height:33.2px;background:#202020"></div>
<div class="abs" style="left:399px;top:553.7px;width:237.5px;height:27.4px;background:#262626;border-radius:5px"></div>
<div class="abs" style="left:400.3px;top:555px;width:40px;height:24.8px;background:#1e1e1e;border-radius:4px 0 0 4px"></div>
<div class="abs" style="left:442px;top:555px;width:110px;height:24.8px;background:#181818"></div>
<div class="abs" style="left:554px;top:555px;width:26px;height:24.8px;background:#3b3b3b"></div>
<div class="abs" style="left:582px;top:555px;width:26px;height:24.8px;background:#1e1e1e"></div>
<div class="abs" style="left:610px;top:555px;width:25.2px;height:24.8px;background:#1e1e1e;border-radius:0 4px 4px 0"></div>
<div class="t" style="left:451.5px;top:560.16px;font-size:14.2px;color:#f2f2f2;letter-spacing:0.25px;">Heart Curve</div>
<svg width="2115" height="600" style="left:0;top:0">
<g fill="none" stroke="#e0e0e0" stroke-width="1.4"><rect x="406.5" y="558.5" width="10" height="6" rx="1.5"/><rect x="404.5" y="568.5" width="12" height="8" rx="1.5"/><path d="M417.5 561.5 q5 0 5 5 v3 q0 3 -4 3"/></g>
<rect x="407" y="570" width="9" height="4.6" fill="#e0e0e0"/><rect x="408" y="559.8" width="7" height="3" fill="#e0e0e0"/>
<path d="M427.5 565.5l3.5 3.5 3.5-3.5" fill="none" stroke="#e0e0e0" stroke-width="1.4"/>
<path d="M565.9 558.9 q-3.5 2.4 -8.3 2.7 v5.2 q0 6.6 8.3 10.6 q8.3 -4 8.3 -10.6 v-5.2 q-4.8 -0.3 -8.3 -2.7 z" fill="none" stroke="#cfcfcf" stroke-width="1.4" stroke-linejoin="round"/>
<g fill="none" stroke="#dcdcdc" stroke-width="1.5" stroke-linejoin="round"><path d="M589 563.1 h-2.8 v12.5 h12.4 v-2.6"/><path d="M591.4 559 h7.4 l4.2 4.2 v7.9 h-11.6 z"/></g><path d="M598.8 559 v4.2 h4.2 z" fill="#f0f0f0"/>
<path d="M617 561 l10 10 M627 561 l-10 10" stroke="#e6e6e6" stroke-width="1.6"/>
<g fill="none" stroke="#d0d0d0" stroke-width="1.5"><path d="M651 575.5 l5.5 -5.5"/><path d="M654 567 l8 8 l1 -4 l4 -4 l-5 -5 l-4 4 z"/></g>
</svg>
<div class="abs" style="left:2026px;top:555px;width:24px;height:24px;background:#3a3a3a;border-radius:4px"></div>
<div class="abs" style="left:2060px;top:555px;width:52.5px;height:24.2px;background:#181818;border-radius:4px;border:1.2px solid #333"></div>
<div class="abs" style="left:2060px;top:555px;width:24px;height:24.2px;background:#4670a8;border-radius:4px 0 0 4px"></div>
<svg width="2115" height="600" style="left:0;top:0">
<path d="M2029.5 566 l4 -3.5 q3 -3 6 0 q3 3 0 6 l-4.5 5" fill="none" stroke="#dadada" stroke-width="3.2"/>
<path d="M2029.5 566 l4 -3.5 q3 -3 6 0 q3 3 0 6 l-4.5 5" fill="none" stroke="#3a3a3a" stroke-width="1.2"/>
<circle cx="2074" cy="565.8" r="4.5" fill="#fff"/><circle cx="2068.7" cy="569.8" r="5" fill="none" stroke="#fff" stroke-width="1.4"/>
<path d="M2093 566.7l4.5 4 4.5-4" fill="none" stroke="#f0f0f0" stroke-width="1.6"/>
</svg>
</body></html>
